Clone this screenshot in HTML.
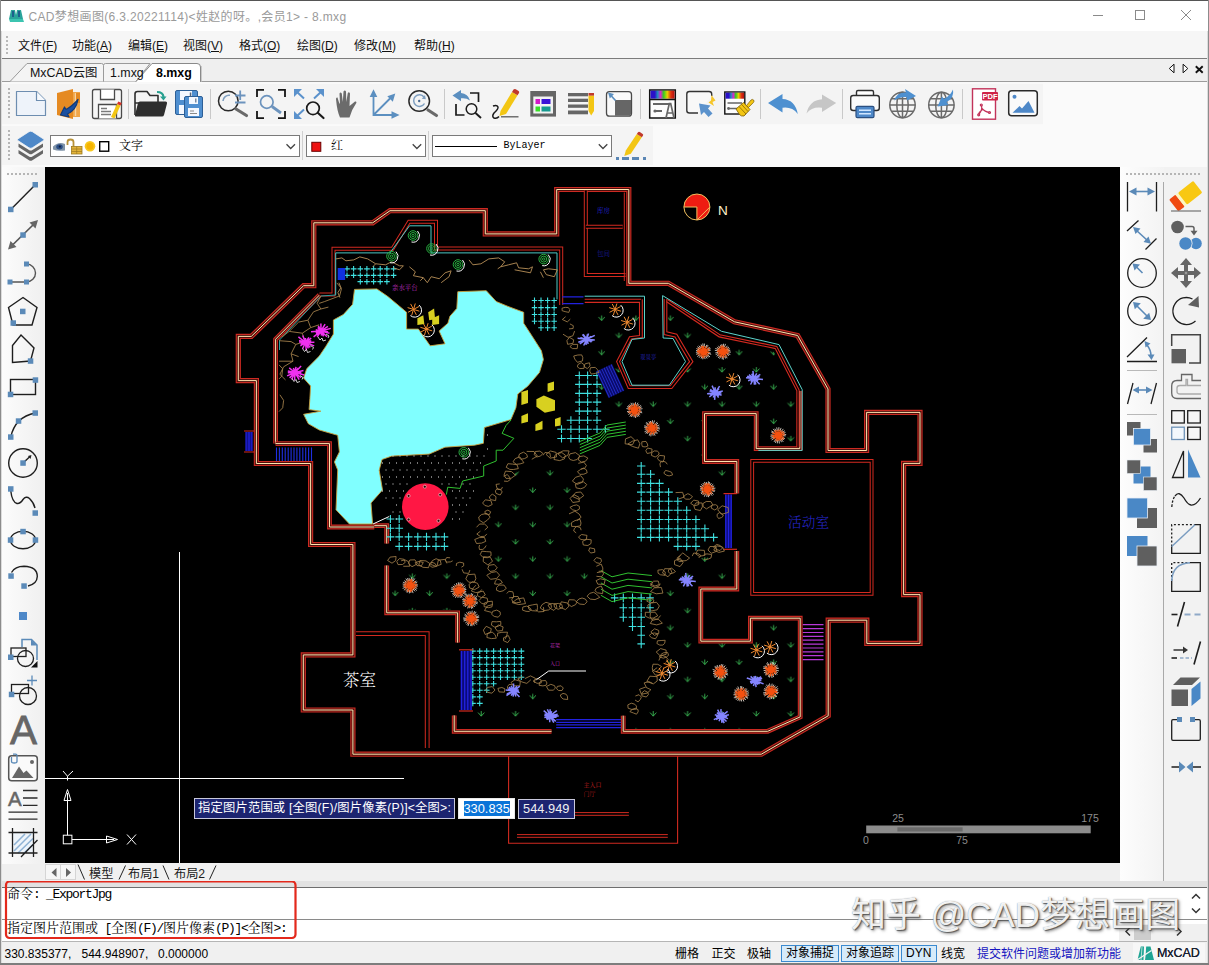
<!DOCTYPE html>
<html lang="zh-CN">
<head>
<meta charset="utf-8">
<title>CAD梦想画图</title>
<style>
html,body{margin:0;padding:0;}
body{width:1209px;height:965px;position:relative;overflow:hidden;background:#f0f0f0;
 font-family:"Liberation Sans","Noto Sans CJK SC",sans-serif;font-size:12px;color:#000;}
.abs{position:absolute;}
#win{position:absolute;left:0;top:0;width:1209px;height:965px;overflow:hidden;}
#titlebar{left:0;top:0;width:1209px;height:31px;background:#fff;border-top:1px solid #555;box-sizing:border-box;}
#title-text{left:28.500px;top:7.500px;color:#9a9a9a;font-size:12px;line-height:17px;white-space:nowrap;letter-spacing:0.340px;}
#menubar{left:0;top:31px;width:1209px;height:27px;background:#f6f6f6;}
.menu{position:absolute;top:6.500px;line-height:17px;font-size:12px;white-space:nowrap;color:#111;}
.menu u{text-decoration:underline;text-underline-offset:1px;}
#tabstrip{left:2px;top:58px;width:1205px;height:24px;background:#efefef;border-top:1px solid #7c7c7c;box-sizing:border-box;}
#tb1{left:2px;top:82px;width:1205px;height:43px;background:#f9f9f9;}
#tb2{left:2px;top:125px;width:1205px;height:42px;background:#f9f9f9;}
#lefttb{left:2px;top:167px;width:43px;height:696px;background:linear-gradient(90deg,#fbfbfb,#f1f1f1);}
#righttb1{left:1120px;top:167px;width:44px;height:714px;background:linear-gradient(90deg,#fdfdfd,#f1f1f1);}
#righttb2{left:1164px;top:167px;width:43px;height:714px;background:linear-gradient(90deg,#fbfbfb,#f1f1f1);border-left:1px solid #a8a8a8;box-sizing:border-box;}
#canvas{left:45px;top:167px;width:1075px;height:696px;background:#000;overflow:hidden;}
#layouttabs{left:2px;top:863px;width:1118px;height:18px;background:#f0f0f0;}
#cmdsep{left:2px;top:881px;width:1205px;height:7px;background:#e2e2e2;border-bottom:1px solid #6e6e6e;box-sizing:border-box;}
#cmdhist{left:2px;top:888px;width:1205px;height:31px;background:#fff;}
#cmdline{left:2px;top:919px;width:1205px;height:22px;background:#fff;border-top:1px solid #8a8a8a;box-sizing:border-box;}
#status{left:2px;top:941px;width:1205px;height:22px;background:#f0f0f0;border-top:1px solid #b5b5b5;box-sizing:border-box;}
.mono{font-family:"Liberation Mono","Noto Sans CJK SC",monospace;}
.st{position:absolute;top:5px;font-size:12px;white-space:nowrap;}
.stb{position:absolute;top:2.500px;height:17.500px;box-sizing:border-box;border:1px solid #3a8ad0;background:#d6ebfa;font-size:12px;white-space:nowrap;line-height:16px;text-align:center;}
.wb{position:absolute;background:#6f6f6f;}
.cmdt{font-family:"Liberation Mono","Noto Serif CJK SC",serif;font-size:13px;line-height:18px;white-space:nowrap;color:#000;}
.cmdt .l{font-family:"Liberation Mono",monospace;font-size:13px;letter-spacing:-1.300px;}
.st,.stb{line-height:15px;}
</style>
</head>
<body>
<div id="win">
<!-- title bar -->
<div id="titlebar" class="abs">
 <svg class="abs" style="left:8px;top:6px" width="17" height="17" viewBox="0 0 17 17">
  <path d="M1 12 L3 3 L7 3 L8 8 L9 3 L13 3 L15 12 Z" fill="#2aa39a"/>
  <path d="M4 4 L6 4 L6 10 L4 10Z M10 4 L12 4 L12 10 L10 10Z" fill="#1d5f8c"/>
  <path d="M1 12 L15 12 L16 15 L2 15 Z" fill="#3cc4b0"/>
 </svg>
 <div id="title-text" class="abs">CAD梦想画图(6.3.20221114)&lt;姓赵的呀。,会员1&gt; - 8.mxg</div>
 <svg class="abs" style="left:1080px;top:0" width="129" height="30" viewBox="0 0 129 30">
  <path d="M13 14.5 H23" stroke="#8a8a8a" stroke-width="1" fill="none"/>
  <rect x="55.5" y="9.5" width="9" height="9" stroke="#8a8a8a" stroke-width="1" fill="none"/>
  <path d="M101 9 L111 19 M111 9 L101 19" stroke="#8a8a8a" stroke-width="1" fill="none"/>
 </svg>
</div>
<!-- menu bar -->
<div id="menubar" class="abs">
 <svg class="abs" style="left:5px;top:4px" width="4" height="20"><g fill="#b8b8b8"><rect x="1" y="1" width="2" height="2"/><rect x="1" y="5" width="2" height="2"/><rect x="1" y="9" width="2" height="2"/><rect x="1" y="13" width="2" height="2"/><rect x="1" y="17" width="2" height="2"/></g></svg>
 <span class="menu" style="left:18px">文件(<u>F</u>)</span>
 <span class="menu" style="left:72px">功能(<u>A</u>)</span>
 <span class="menu" style="left:128px">编辑(<u>E</u>)</span>
 <span class="menu" style="left:183px">视图(<u>V</u>)</span>
 <span class="menu" style="left:239px">格式(<u>O</u>)</span>
 <span class="menu" style="left:297px">绘图(<u>D</u>)</span>
 <span class="menu" style="left:354px">修改(<u>M</u>)</span>
 <span class="menu" style="left:414px">帮助(<u>H</u>)</span>
</div>
<!-- document tab strip -->
<div id="tabstrip" class="abs">
 <svg class="abs" style="left:0;top:0" width="1205" height="24" viewBox="2 59 1205 24">
  <rect x="2" y="59" width="1205" height="24" fill="#efefef"/>
  <path d="M2 81.5 H1207" stroke="#9c9c9c" stroke-width="1"/>
  <path d="M10 81.5 L27 63.5 H101.5 Q103.5 63.5 103.5 65.5 V81.5" fill="#f4f4f4" stroke="#9a9a9a" stroke-width="1"/>
  <path d="M103.5 81.5 V65.5 Q103.5 63.5 105.5 63.5 H150 L136 81.5" fill="#f4f4f4" stroke="#9a9a9a" stroke-width="1"/>
  <path d="M136 82 L152 63.5 H197 Q200 63.5 200 66.5 V82 Z" fill="#fff" stroke="none"/>
  <path d="M136 81.5 L152 63.5 H197 Q200.5 63.5 200.5 67 V81.5" fill="none" stroke="#8a8a8a" stroke-width="1"/>
  <path d="M201.5 66 V81.5" stroke="#c9c9c9" stroke-width="1"/>
  <path d="M1169.3 68.500 L1174 64.200 V72.800 Z" fill="#fff" stroke="#111" stroke-width="1"/>
  <path d="M1187.8 68.500 L1183.100 64.200 V72.800 Z" fill="#fff" stroke="#111" stroke-width="1"/>
  <path d="M1195.8 66.300 L1202.700 72.800 M1202.700 66.300 L1195.800 72.800" stroke="#111" stroke-width="1.900"/>
 </svg>
 <span class="abs" style="left:28px;top:4px;font-size:12.4px;white-space:nowrap;color:#111">MxCAD云图</span>
 <span class="abs" style="left:108px;top:6.500px;line-height:14px;font-size:12.4px;white-space:nowrap;color:#111">1.mxg</span>
 <span class="abs" style="left:154px;top:6.500px;line-height:14px;font-size:12.4px;white-space:nowrap;color:#000;font-weight:bold">8.mxg</span>
</div>
<div id="tb1" class="abs"></div>
<div id="tb2" class="abs"></div>



<div id="layouttabs" class="abs"></div>
<div id="cmdsep" class="abs"></div>
<div id="cmdhist" class="abs"></div>
<div id="cmdline" class="abs"></div>
<div id="status" class="abs"></div>
<svg class="abs" style="left:0;top:82px" width="1209" height="43" viewBox="0 82 1209 43">
 <defs>
  <linearGradient id="rainbow" x1="0" x2="1" y1="0" y2="0">
   <stop offset="0" stop-color="#2a10c8"/><stop offset="0.18" stop-color="#2a10c8"/>
   <stop offset="0.3" stop-color="#2090c0"/><stop offset="0.42" stop-color="#e020d0"/>
   <stop offset="0.55" stop-color="#30d020"/><stop offset="0.7" stop-color="#e8d000"/>
   <stop offset="0.85" stop-color="#e03010"/><stop offset="1" stop-color="#b01010"/>
  </linearGradient>
 </defs>
 <rect x="2" y="84" width="1041" height="40" fill="#f4f4f4"/>
 <rect x="1043" y="82" width="164" height="43" fill="#fafafa"/>
 <!-- grip -->
 <g fill="#b5b5b5"><rect x="8" y="88" width="2" height="2"/><rect x="8" y="92" width="2" height="2"/><rect x="8" y="96" width="2" height="2"/><rect x="8" y="100" width="2" height="2"/><rect x="8" y="104" width="2" height="2"/><rect x="8" y="108" width="2" height="2"/><rect x="8" y="112" width="2" height="2"/><rect x="8" y="116" width="2" height="2"/></g>
 <!-- separators -->
 <g stroke="#c9c9c9" stroke-width="1"><path d="M128.500 89 V119 M210.500 89 V119 M444.500 89 V119 M640.500 89 V119 M760.500 89 V119 M842.500 89 V119 M962.500 89 V119"/></g>
 <!-- 1 new -->
 <path d="M16.500 91.500 H36.500 L45.500 100.500 V115.500 H16.500 Z" fill="#eef3fa" stroke="#6d8db0" stroke-width="1.2" stroke-linejoin="round"/>
 <path d="M36.500 91.500 V100.500 H45.500" fill="#f6f9fd" stroke="#6d8db0" stroke-width="1.2" stroke-linejoin="round"/>
 <!-- 2 orange folder with arrow -->
 <path d="M57 93 L73 89 V119 L57 115 Z" fill="#e58a22"/>
 <path d="M73 92 H80 V117 H73 Z" fill="#f0a64a"/>
 <path d="M75.500 93 V116" stroke="#f8d3a0" stroke-width="1.4"/>
 <path d="M76 103 H80 V93 H76Z" fill="#e58a22"/>
 <path d="M78 99.500 Q76 110.500 67.500 114 L69 117 L60.500 115 L64.500 107 L66 109.500 Q72 106.500 78 99.500 Z" fill="#1a4fa0" stroke="#123a78" stroke-width="1.2" stroke-linejoin="round"/>
 <!-- 3 save w pencil -->
 <rect x="92.500" y="89.500" width="29" height="29" rx="2" fill="#f6f6f6" stroke="#4a4a4a" stroke-width="1.3"/>
 <path d="M100.500 89.500 V99.500 H114.500 V89.500" fill="#fff" stroke="#4a4a4a" stroke-width="1.3"/>
 <path d="M98.500 118.500 V104.500 H116.500 V118.500" fill="#fff" stroke="#4a4a4a" stroke-width="1.3"/>
 <path d="M101 108.500 H107 M101 111.500 H111 M101 114.500 H111" stroke="#7a7a7a" stroke-width="1.6"/>
 <path d="M111 117 L117 104 L120.500 105.500 L114.500 118.500 Z" fill="#f3c614"/>
 <path d="M117 104 L118.300 101.500 L121.800 103 L120.500 105.500 Z" fill="#d8342a"/>
 <!-- 4 open folder -->
 <path d="M135 115 V94 Q135 91.500 137.500 91.500 H147 L150 95.500 H158 V103 H135" fill="#f4f4f4" stroke="#2e2e2e" stroke-width="1.6" stroke-linejoin="round"/>
 <path d="M136 116.500 Q134.500 116.500 135 115 L138 103 Q138.500 101.500 140 101.500 H165.500 Q167.500 101.500 167 103.500 L164 115 Q163.500 116.500 162 116.500 Z" fill="#2e2e2e"/>
 <path d="M157 92 Q163 92 163.500 97" fill="none" stroke="#28a090" stroke-width="2.2"/>
 <path d="M160 96.500 H166.500 L163.500 100.500 Z" fill="#28a090"/>
 <!-- 5 save all -->
 <rect x="175.500" y="90.500" width="22" height="24" rx="1.500" fill="#4f8fd0" stroke="#2d5f96" stroke-width="1"/>
 <rect x="180" y="91" width="12" height="9" fill="#f4f8ff"/>
 <rect x="179" y="105" width="5" height="9" fill="#f4f8ff"/>
 <rect x="184.500" y="96.500" width="18" height="21" rx="1.500" fill="#4f8fd0" stroke="#2d5f96" stroke-width="1"/>
 <rect x="189" y="97" width="9" height="7" fill="#f4f8ff"/><rect x="195" y="98.500" width="1.500" height="4" fill="#7a8aa0"/>
 <rect x="188" y="108" width="11" height="8" fill="#f4f8ff"/><path d="M190 111 H194 M190 113.500 H197" stroke="#8a8a8a" stroke-width="1"/>
 <rect x="189.800" y="92.500" width="1.500" height="4" fill="#55657a"/>
 <!-- 6 zoom +/- -->
 <circle cx="228.300" cy="101" r="9.800" fill="none" stroke="#2a2a2a" stroke-width="1.500"/>
 <path d="M223 101 A6 6 0 0 1 230 95.300" fill="none" stroke="#7f9fc0" stroke-width="1.600"/>
 <path d="M236 109 L246.500 115.500" stroke="#6a6a6a" stroke-width="3.200" stroke-linecap="round"/>
 <path d="M235 95.500 H245.500 M240.200 90.500 V100 M235 102.500 H245.500" stroke="#6c93bd" stroke-width="1.800"/>
 <!-- 7 zoom window -->
 <path d="M264 89.800 H257 V97 M278 89.800 H285 V97 M264 118.200 H257 V111 M278 118.200 H285 V111" fill="none" stroke="#151515" stroke-width="1.800"/>
 <circle cx="266.800" cy="102" r="6.300" fill="none" stroke="#6c93bd" stroke-width="1.700"/>
 <path d="M272 106.500 L281 113" stroke="#6c93bd" stroke-width="2.800"/>
 <!-- 8 zoom extents -->
 <g fill="#5b92cc"><path d="M294 89 H302 L294 97Z M324 89 H316 L324 97Z M294 119 H302 L294 111Z"/></g>
 <path d="M296 91 L304 98.500 M322 91 L314 98.500 M296 117 L304 109.500" stroke="#5b92cc" stroke-width="2"/>
 <circle cx="313" cy="108.300" r="6.300" fill="none" stroke="#1a1a1a" stroke-width="1.700"/>
 <path d="M318 113 L323.500 118" stroke="#1a1a1a" stroke-width="2.200" stroke-linecap="round"/>
 <!-- 9 hand -->
 <path d="M340 117.500 Q337 111 336 99 Q336 97 337.500 97.500 Q339 103 340 104 L339.500 93.500 Q340.500 91.500 341.800 93.500 L342.800 102 L343.500 91.500 Q344.800 89.500 346 91.500 L346.300 102 L347.800 93 Q349 91.500 350 93.500 L349.500 106 Q352 104 355 101.500 Q357 101 356.300 103 Q352 109 349.500 117.500 Z" fill="#6b6b6b"/>
 <!-- 10 axes -->
 <path d="M373.500 97 V115 H392 M373.500 115 L390 98.500" fill="none" stroke="#5b8fc0" stroke-width="1.800"/>
 <path d="M373.500 89.300 L377.300 97 H369.700Z M399.600 115 L391.500 111.200 V118.800Z M395.300 93.500 L392.800 101.800 L387.300 96.300Z" fill="#5b8fc0"/>
 <!-- 11 zoom regen -->
 <circle cx="419.200" cy="101" r="10.300" fill="none" stroke="#2a2a2a" stroke-width="1.500"/>
 <path d="M428 110 L436.500 115.500" stroke="#6a6a6a" stroke-width="3.200" stroke-linecap="round"/>
 <path d="M424.500 103.500 A5.800 5.800 0 1 1 424 97" fill="none" stroke="#7f9fc0" stroke-width="1.500"/>
 <path d="M421.800 98.800 L425.800 99.300 L425 95Z" fill="#7f9fc0"/><circle cx="419.200" cy="101" r="1.200" fill="#4a6a90"/>
 <!-- 12 zoom previous -->
 <path d="M470 93 H478.500 V102 M456 104 V115 H464.500" fill="none" stroke="#1a1a1a" stroke-width="1.700"/>
 <circle cx="471.500" cy="109" r="5.300" fill="none" stroke="#1a1a1a" stroke-width="1.500"/>
 <path d="M475.500 113 L481 118" stroke="#1a1a1a" stroke-width="1.900"/>
 <path d="M452.500 95.500 L461 90 V93 Q468 93.500 470 100.500 Q466 97.500 461 98.300 V101.300 Z" fill="#5b8fc0"/>
 <!-- 13 sketch pencil -->
 <path d="M493 106 Q497 104.500 498 107 Q498.500 109 494 113 Q491.500 116.500 494 118 Q497 119 499 116.500" fill="none" stroke="#1a1a1a" stroke-width="1.500"/>
 <path d="M501 116.800 H518.500" stroke="#5a5a5a" stroke-width="1.300"/>
 <path d="M499.500 116 L500.500 111 L512 92 L517.500 95.200 L506 114 Z" fill="#f3c614"/>
 <path d="M512 92 L513.500 89.500 Q514.500 88.500 515.800 89.200 L518.600 90.900 Q519.600 91.800 519 93 L517.500 95.200 Z" fill="#c0392b"/>
 <!-- 14 color grid -->
 <rect x="530.300" y="91" width="25.700" height="25.600" fill="#666"/>
 <rect x="533.300" y="96.500" width="19.700" height="17" fill="#f2f2f2"/>
 <rect x="535.500" y="99" width="4.500" height="5" fill="#d418c8"/><rect x="541.500" y="99" width="9" height="5" fill="#3a14d8"/>
 <rect x="535.500" y="106.500" width="4.500" height="5" fill="#38e028"/><rect x="541.500" y="106.500" width="9" height="5" fill="#159a90"/>
 <!-- 15 lines + pencil -->
 <g fill="#666"><rect x="568" y="93" width="20" height="3.300"/><rect x="568" y="98.700" width="20" height="3.300"/><rect x="568" y="104.500" width="20" height="3.300"/><rect x="568" y="110.500" width="20" height="3.800"/></g>
 <path d="M588.500 95.500 H594 V111 L591.200 115.500 L588.500 111 Z" fill="#f3c614"/><rect x="588.500" y="93" width="5.500" height="2.600" fill="#c0392b"/>
 <!-- 16 scale -->
 <rect x="606.500" y="91.700" width="25" height="24.500" rx="3" fill="#fafafa" stroke="#4a4a4a" stroke-width="1.300"/>
 <path d="M615 100 H631 V113.500 Q631 115.700 628.500 115.700 H615 Z" fill="#666"/>
 <path d="M615.500 100.500 L610.500 95" stroke="#5b8fc0" stroke-width="1.700"/><path d="M608 92.500 L614 94 L609.800 98.500Z" fill="#5b8fc0"/>
 <!-- 17 rainbow A -->
 <rect x="649.700" y="90" width="25.600" height="28" fill="#fdfdfd" stroke="#111" stroke-width="1.500"/>
 <rect x="650.500" y="90.700" width="24" height="8" fill="url(#rainbow)"/>
 <path d="M649 99.500 H676" stroke="#111" stroke-width="1.500"/>
 <path d="M653 104 H671 M654 111 H662" stroke="#666" stroke-width="2"/><circle cx="655" cy="111" r="1.600" fill="#666"/>
 <path d="M666 118 L669.300 103.500 H670.700 L674 118 M667.300 113 H672.700" fill="none" stroke="#666" stroke-width="1.700"/>
 <!-- 18 select w cursor -->
 <path d="M698 113 H689.500 Q686.800 113 686.800 110.500 V94 Q686.800 91.500 689.500 91.500 H709 Q711.700 91.500 711.700 94 V96" fill="#f8f8f8" stroke="#333" stroke-width="1.400"/>
 <path d="M711.500 95 L715.500 100.500 L712.500 102 L714 106 L708.500 102.500 L711 100.500 Z" fill="#f6c62a"/>
 <path d="M699 103.500 L710.500 105.500 L708 108.500 L712.500 113.500 L708.500 117 L704 112 L701 115 Z" fill="#5b92cc"/>
 <!-- 19 rainbow brush -->
 <rect x="724.800" y="92" width="20" height="22" fill="#fdfdfd" stroke="#111" stroke-width="1.400"/>
 <rect x="725.500" y="92.700" width="18.600" height="6" fill="url(#rainbow)"/>
 <path d="M727.500 103 H742 M728 108.500 H740" stroke="#666" stroke-width="1.700"/><circle cx="728.500" cy="108.500" r="1.400" fill="#666"/>
 <path d="M736 109 L743.500 102.500 L750 109.500 L744 116 Q741 116.500 739.500 114.500 Z" fill="#f3c614" stroke="#7a5a00" stroke-width="0.800"/>
 <path d="M746.500 105.500 L751 100 Q752.500 98.800 753.600 100 Q754.500 101.300 753.400 102.500 L748.500 107.500 Z" fill="#f3c614" stroke="#7a5a00" stroke-width="0.700"/>
 <path d="M739 106.500 L746 114 M741.500 104.300 L748 111.500" stroke="#7a5a00" stroke-width="0.700"/>
 <!-- 20 undo -->
 <path d="M768 103 L782.500 94 V99 Q795 99.500 797.800 114 Q792 106.500 782.500 107.800 V112.500 Z" fill="#4e90d0"/>
 <!-- 21 redo -->
 <path d="M836.200 103 L822 94.500 V99.300 Q809.500 100 806.500 113.500 Q812 106.500 822 107.800 V112 Z" fill="#c6c6c6"/>
 <!-- 22 printer -->
 <path d="M856.500 96 V92 Q856.500 90.500 858 90.500 H872 Q873.500 90.500 873.500 92 V96" fill="#fff" stroke="#2e2e2e" stroke-width="1.400"/>
 <rect x="850.700" y="95.500" width="28.600" height="15" rx="2.500" fill="#fbfbfb" stroke="#2e2e2e" stroke-width="1.400"/>
 <rect x="856" y="106.300" width="18" height="11.400" rx="1.500" fill="#4e88c8" stroke="#2b4f80" stroke-width="1.200"/>
 <path d="M859 110.300 H871 M859 113.700 H871" stroke="#cfe6ff" stroke-width="1.500"/>
 <!-- 23 globe out -->
 <g fill="none" stroke="#6a6a6a" stroke-width="1.500">
  <circle cx="902.500" cy="105" r="12.700"/><ellipse cx="902.500" cy="105" rx="5.700" ry="12.700"/>
  <path d="M902.500 92.300 V117.700 M889.800 105 H915.200 M891.500 98.700 H913.500 M891.500 111.300 H913.500"/>
 </g>
 <path d="M894 100.500 Q897 92 906 92.500 L905 89 L916 96 L907 100.500 L906.500 97 Q900 96.500 894 100.500 Z" fill="#4e90d0"/>
 <!-- 24 globe in -->
 <g fill="none" stroke="#6a6a6a" stroke-width="1.500">
  <circle cx="941.400" cy="105" r="12.700"/><ellipse cx="941.400" cy="105" rx="5.700" ry="12.700"/>
  <path d="M941.400 92.300 V117.700 M928.700 105 H954.100 M930.400 98.700 H952.400 M930.400 111.300 H952.400"/>
 </g>
 <path d="M953 89.500 Q954.500 98 946.500 102 L948.500 105 L937.500 106.500 L942 96.500 L944 99 Q950 96 953 89.500 Z" fill="#4e90d0"/>
 <!-- 25 pdf -->
 <rect x="972.500" y="88.800" width="23" height="30.400" fill="#fff" stroke="#c2335a" stroke-width="1.400"/>
 <rect x="982" y="92" width="16" height="8.500" rx="1" fill="#cf2348"/>
 <text x="990" y="99.300" font-family="Liberation Sans,sans-serif" font-weight="bold" font-size="7.600" fill="#fff" text-anchor="middle">PDF</text>
 <g fill="none" stroke="#c2335a" stroke-width="1.200"><path d="M981.500 105.500 Q982.500 110 979 114.500 M981.500 108 Q985 112 989.500 112.500 M982.500 109.500 Q979 112 978.500 114.500"/><circle cx="981.300" cy="105" r="1"/><circle cx="989.500" cy="112.500" r="1"/><circle cx="978.700" cy="114.800" r="1"/></g>
 <!-- 26 image -->
 <rect x="1008.700" y="90.800" width="28.600" height="25" rx="3" fill="#fafafa" stroke="#2a2a2a" stroke-width="1.500"/>
 <circle cx="1014.500" cy="96.800" r="2" fill="#4e88c8"/>
 <path d="M1012.500 112.800 L1019.500 106 L1022 108.500 L1028.500 101 L1034.500 112.800 Z" fill="#4e88c8"/>
</svg>
<svg class="abs" style="left:0;top:125px" width="1209" height="42" viewBox="0 125 1209 42">
 <rect x="2" y="125" width="1205" height="42" fill="#fafafa"/>
 <rect x="2" y="126" width="651" height="39" fill="#f4f4f4"/>
 <g fill="#b5b5b5"><rect x="8" y="130" width="2" height="2"/><rect x="8" y="134" width="2" height="2"/><rect x="8" y="138" width="2" height="2"/><rect x="8" y="142" width="2" height="2"/><rect x="8" y="146" width="2" height="2"/><rect x="8" y="150" width="2" height="2"/><rect x="8" y="154" width="2" height="2"/><rect x="8" y="158" width="2" height="2"/></g>
 <!-- layers icon -->
 <path d="M18.500 148 L29 154.500 Q30.700 155.500 32.400 154.500 L43 148 L43 151.500 L32.400 158.300 Q30.700 159.300 29 158.300 L18.500 151.500 Z" fill="#666" transform="translate(0,2)"/>
 <path d="M18.500 148 L29 154.500 Q30.700 155.500 32.400 154.500 L43 148 L43 151.500 L32.400 158.300 Q30.700 159.300 29 158.300 L18.500 151.500 Z" fill="#666" transform="translate(0,-4.500)"/>
 <path d="M17.800 140.500 Q16.800 139.800 17.800 139 L29 131.700 Q30.700 130.700 32.400 131.700 L43.500 139 Q44.600 139.800 43.500 140.500 L32.400 147.800 Q30.700 148.800 29 147.800 Z" fill="#4e88c8" stroke="#f4f4f4" stroke-width="0.800"/>
 <!-- combo 1 -->
 <rect x="50.500" y="135.500" width="249" height="21" fill="#fff" stroke="#7a7a7a" stroke-width="1"/>
 <path d="M286.500 144.300 L290.700 148.500 L295 144.300" fill="none" stroke="#444" stroke-width="1.300"/>
 <!-- eye -->
 <path d="M53 146.500 Q58.500 141 65 144 V150.500 Q58 151.500 53 149.500 Z" fill="#7f93a8"/>
 <ellipse cx="59.500" cy="146.800" rx="3.300" ry="2.600" fill="#2c4f86"/><circle cx="59.800" cy="146.600" r="1.100" fill="#0c1c3c"/>
 <!-- lock -->
 <path d="M67.500 145 V142 Q67.500 139.500 70.500 139.500 Q73.500 139.500 73.500 142 V146.500" fill="none" stroke="#b8923a" stroke-width="1.800"/>
 <rect x="71.500" y="146.500" width="10.500" height="7.500" fill="#e3b33a" stroke="#9c7a20" stroke-width="0.800"/>
 <path d="M71.500 149 H82 M71.500 151.500 H82 M76.700 146.500 V154" stroke="#9c7a20" stroke-width="0.700"/>
 <!-- sun -->
 <circle cx="90" cy="146.300" r="5.300" fill="#f8c81e"/><circle cx="90" cy="146.300" r="3.500" fill="#f5b400"/>
 <!-- square -->
 <rect x="99.700" y="141.700" width="9" height="9.500" fill="#fff" stroke="#000" stroke-width="1.400"/>
 <line x1="302.500" y1="131" x2="302.500" y2="160" stroke="#d0d0d0"/>
 <!-- combo 2 -->
 <rect x="306.500" y="135.500" width="119" height="21" fill="#fff" stroke="#7a7a7a" stroke-width="1"/>
 <rect x="311.800" y="142.300" width="9" height="9" fill="#ee1111" stroke="#6a0000" stroke-width="1"/>
 <path d="M412.700 144.300 L416.900 148.500 L421.200 144.300" fill="none" stroke="#444" stroke-width="1.300"/>
 <line x1="428.500" y1="131" x2="428.500" y2="160" stroke="#d0d0d0"/>
 <!-- combo 3 -->
 <rect x="432.500" y="135.500" width="179" height="21" fill="#fff" stroke="#7a7a7a" stroke-width="1"/>
 <path d="M435 146.500 H497" stroke="#000" stroke-width="1"/>
 <path d="M598.800 144.300 L603 148.500 L607.300 144.300" fill="none" stroke="#444" stroke-width="1.300"/>
 <!-- pencil dashed -->
 <path d="M624.300 156 L625.800 150.500 L636.800 134 L641.800 137.300 L630.800 153.800 Z" fill="#f3c614"/>
 <path d="M636.800 134 L638 132.200 Q638.800 131.400 639.800 132 L642.700 133.900 Q643.600 134.700 643 135.600 L641.800 137.300 Z" fill="#c0392b"/>
 <g fill="#5a86b4"><rect x="616" y="157" width="3" height="3"/><rect x="622" y="157" width="7" height="3"/><rect x="632" y="157" width="7" height="3"/><rect x="643" y="157" width="3" height="3"/></g>
</svg>
<span class="abs" style="left:119px;top:138px;font-size:12px;line-height:16px;white-space:nowrap;font-family:'Liberation Serif','Noto Serif CJK SC',serif">文字</span>
<span class="abs" style="left:331px;top:138px;font-size:12px;line-height:16px;white-space:nowrap;font-family:'Liberation Serif','Noto Serif CJK SC',serif">红</span>
<span class="abs mono" style="left:503.500px;top:138px;font-size:10px;line-height:16px;white-space:nowrap;font-family:'Liberation Mono',monospace">ByLayer</span>
<svg class="abs" style="left:0;top:167px" width="45" height="714" viewBox="0 167 45 714">
 <defs><linearGradient id="lg" x1="0" x2="1"><stop offset="0" stop-color="#fcfcfc"/><stop offset="1" stop-color="#efefef"/></linearGradient></defs>
 <rect x="2" y="167" width="43" height="697" fill="url(#lg)"/>
 <rect x="2" y="864" width="43" height="17" fill="#f0f0f0"/>
 <g fill="#b5b5b5"><rect x="7" y="173" width="2" height="2"/><rect x="11" y="173" width="2" height="2"/><rect x="15" y="173" width="2" height="2"/><rect x="19" y="173" width="2" height="2"/><rect x="23" y="173" width="2" height="2"/><rect x="27" y="173" width="2" height="2"/><rect x="31" y="173" width="2" height="2"/><rect x="35" y="173" width="2" height="2"/></g>
 <g fill="none" stroke="#1e1e1e" stroke-width="1.400">
  <!-- line -->
  <path d="M10.800 209.400 L35.300 184.700"/>
  <!-- polyline -->
  <path d="M10 282 H26.500 A9 9 0 0 0 26.500 264" stroke="#555"/>
  <!-- polygon -->
  <path d="M23 297.500 L37 307.500 L32 325 H13 L8.500 307.500 Z"/>
  <path d="M21 335 L34 348 L30.500 361 L12.500 362.500 V345.500 Z"/>
  <!-- rect -->
  <rect x="10.500" y="379.500" width="25" height="15"/>
  <!-- arc -->
  <path d="M10.800 437 Q15 417 35.300 413"/>
  <!-- circle -->
  <circle cx="23" cy="463" r="14.300"/>
  <path d="M23 463 L30 456.500"/>
  <!-- spline -->
  <path d="M10.800 491 Q12 502 17 503.500 Q20 504 23 499.500 Q26 495.500 29.500 498.500 Q34 503 35 508"/>
  <!-- ellipse -->
  <ellipse cx="23" cy="540" rx="12.500" ry="8.800"/>
  <!-- ellipse arc -->
  <path d="M11.500 572.500 Q15 566.300 24 566.300 Q37.300 566.800 37.300 576.500 Q37 584 28 586"/>
  <!-- insert block -->
  <rect x="11" y="648" width="15" height="8.500" stroke-width="1.300"/>
  <circle cx="25.500" cy="658.500" r="8" stroke-width="1.300"/>
  <!-- create block -->
  <rect x="11.500" y="684.500" width="17" height="9" stroke-width="1.300"/>
  <circle cx="28" cy="696" r="8.500" stroke-width="1.300"/>
 </g>
 <path d="M31.500 455 L28 456 L30.500 459Z" fill="#1e1e1e"/>
 <!-- xline -->
 <path d="M12 245.500 L34 224" stroke="#555" stroke-width="1.700"/>
 <path d="M38 220 L29.500 222.500 L35.500 228.500Z M8 249.500 L16.500 247 L10.500 241Z" fill="#666"/>
 <g fill="#5b8ab8">
  <rect x="32.500" y="182" width="5.500" height="5.500"/><rect x="8" y="206.700" width="5.500" height="5.500"/>
  <rect x="20.300" y="232.300" width="5.500" height="5.500"/>
  <rect x="7.500" y="279.500" width="5" height="5"/><rect x="24" y="279.500" width="5" height="5"/><rect x="24" y="261.500" width="5" height="5"/>
  <rect x="20" y="308.700" width="5.500" height="5.500"/><rect x="10.500" y="320.300" width="5.500" height="5.500"/>
  <rect x="27.800" y="358.300" width="5.500" height="5.500"/>
  <rect x="32.700" y="377.300" width="5.500" height="5.500"/><rect x="7.800" y="391.700" width="5.500" height="5.500"/>
  <rect x="32.500" y="410.300" width="5.500" height="5.500"/><rect x="15.800" y="418.300" width="5.500" height="5.500"/><rect x="8" y="434.300" width="5.500" height="5.500"/>
  <rect x="20.300" y="460.300" width="5.500" height="5.500"/>
  <rect x="8" y="486.200" width="5.500" height="5.500"/><rect x="32.500" y="510.300" width="5.500" height="5.500"/>
  <rect x="20.300" y="528.800" width="5.500" height="5.500"/><rect x="7.800" y="537.300" width="5.500" height="5.500"/><rect x="32.700" y="537.300" width="5.500" height="5.500"/>
  <rect x="8.300" y="573.300" width="5.500" height="5.500"/><rect x="21.300" y="583.300" width="5.500" height="5.500"/>
  <rect x="19" y="612" width="8" height="8" fill="#4e88c8"/>
  <rect x="8" y="654.500" width="5.500" height="5.500"/>
  <rect x="8.800" y="691.700" width="5.500" height="5.500"/>
 </g>
 <!-- insert block doc -->
 <path d="M22 647 V639.500 H31.500 L37 645 V660" fill="none" stroke="#5b8ab8" stroke-width="1.500"/>
 <path d="M31 639.500 L37 645.500 H31Z" fill="#5b8ab8"/>
 <path d="M37.500 661 V667.500 H31Z" fill="#111"/>
 <path d="M27 680.500 H37 M32 675.500 V685.500" stroke="#5b8ab8" stroke-width="1.300"/>
 <!-- big A -->
 <text x="23.500" y="744" font-family="Liberation Sans,sans-serif" font-size="40.500" fill="#666" text-anchor="middle" stroke="#666" stroke-width="0.800">A</text>
 <!-- image icon -->
 <rect x="8.700" y="755.700" width="28.600" height="25" rx="3" fill="#fafafa" stroke="#555" stroke-width="1.500"/>
 <circle cx="32" cy="762" r="2" fill="#666"/>
 <path d="M12 778 L19 766.500 L23.500 773 L26.500 770.500 L33.500 778 Z" fill="#666"/>
 <path d="M11.500 757 V761.500 Q11.500 763 14.200 763 Q17 763 17 761.500 V755.500 Q17 754.200 15.500 754.200 H13" fill="none" stroke="#5b8ab8" stroke-width="1.300"/>
 <!-- mtext -->
 <text x="14.800" y="806" font-family="Liberation Sans,sans-serif" font-size="20.500" fill="#666" text-anchor="middle" stroke="#666" stroke-width="0.500">A</text>
 <path d="M23 790.500 H37.500 M23 798 H37.500 M23 805.300 H37.500 M8.500 812.200 H37.500 M8.500 819.200 H37.500" stroke="#2a2a2a" stroke-width="1.300"/>
 <!-- hatch -->
 <rect x="13" y="833" width="20" height="20" fill="#eef4fa"/>
 <path d="M14 845 L25 834 M14 851 L31 834 M18 853 L33 838.500 M24 853 L33 844.500" stroke="#8fb2d4" stroke-width="1.500"/>
 <path d="M12.500 828 V857 M33.500 828 V857 M8.500 832.500 H37.500 M8.500 853 H37.500 M21 857 L37.500 840" stroke="#1e1e1e" stroke-width="1.300" fill="none"/>
</svg>
<svg class="abs" style="left:1120px;top:167px" width="89" height="714" viewBox="1120 167 89 714">
 <defs><linearGradient id="rg" x1="0" x2="1"><stop offset="0" stop-color="#fdfdfd"/><stop offset="1" stop-color="#f3f3f3"/></linearGradient></defs>
 <rect x="1120" y="167" width="44" height="714" fill="url(#rg)"/>
 <rect x="1164" y="167" width="43" height="714" fill="#f2f2f2"/>
 <path d="M1163.500 182 V881" stroke="#a9a9a9" stroke-width="1"/>
 <g fill="#b5b5b5" id="rgrip"></g>
 <path d="M1126 174 H1200" stroke="#b5b5b5" stroke-width="2" stroke-dasharray="2 2"/>
 <g fill="none" stroke="#1e1e1e" stroke-width="1.300">
  <!-- linear dim -->
  <path d="M1127.500 182 V211.500 M1156.500 182 V211.500"/>
  <!-- aligned dim -->
  <path d="M1127 231 L1138.500 220.500 M1145.500 249.500 L1156.500 238.500"/>
  <!-- radius -->
  <circle cx="1142" cy="273" r="14.300"/>
  <!-- diameter -->
  <circle cx="1142" cy="311" r="14.300"/>
  <!-- angular -->
  <path d="M1127 357 L1147 337.500 M1127 361.500 H1157"/>
  <!-- quick dim -->
  <path d="M1127.500 404 L1133 383 M1151 404 L1156.500 383"/>
  <!-- rotate -->
  <path d="M1192.500 299 A13.500 13.500 0 1 0 1195.500 321" />
  <!-- scale -->
  <path d="M1171.700 346 V334.700 H1200.300 V363 H1189" stroke="#444" stroke-width="1.500"/>
  <!-- array -->
  <rect x="1171.700" y="410.700" width="12.600" height="12.300" fill="#f6f6f6"/><rect x="1187.700" y="410.700" width="12.600" height="12.300" fill="#f6f6f6"/><rect x="1187.700" y="427.200" width="12.600" height="12.300" fill="#f6f6f6"/>
  <!-- mirror -->
  <path d="M1183.500 451 V477.500 H1172.500 Z"/>
  <!-- wave -->
  <path d="M1171.800 507 Q1172.500 499 1175 496" stroke-dasharray="2.500 1.500"/>
  <path d="M1175 496 Q1179 490.500 1184 498 Q1187.500 504.500 1191 505 Q1196 505.500 1200.500 498"/>
  <!-- chamfer -->
  <path d="M1195 524.700 H1200.300 V553.300 H1171.700 V546.500"/>
  <path d="M1171.700 546.500 V524.700 H1195" stroke-dasharray="2 2"/>
  <!-- fillet -->
  <path d="M1190 562.700 H1200.300 V591.300 H1171.700 V581"/>
  <path d="M1171.700 581 V562.700 H1190" stroke-dasharray="2 2"/>
  <!-- trim -->
  <path d="M1184.500 602 L1177.500 626.500" stroke-width="1.600"/><path d="M1171.500 614.500 H1177.500" stroke-width="1.600"/>
  <!-- extend -->
  <path d="M1200.500 641.500 L1194 664.500" stroke-width="1.600"/><path d="M1171.500 658 H1177" stroke-width="1.600"/>
  <path d="M1173.500 650 H1184" stroke="#333" stroke-width="1.500"/>
  <!-- break -->
  <path d="M1182 719.700 H1173 Q1171.700 719.700 1171.700 721 V739 Q1171.700 740.300 1173 740.300 H1199 Q1200.300 740.300 1200.300 739 V721 Q1200.300 719.700 1199 719.700 H1190"/>
  <!-- join -->
  <path d="M1171.500 767 H1180 M1192 767 H1201" stroke-width="1.500"/>
 </g>
 <path d="M1183 646.500 L1188 650 L1183 653.500Z" fill="#333"/>
 <!-- blue dims -->
 <g stroke="#5b8ab8" stroke-width="1.600" fill="#5b8ab8">
  <path d="M1134 191.500 H1150"/><path d="M1129 191.500 L1136.500 187.500 V195.500Z M1155 191.500 L1147.500 187.500 V195.500Z" stroke="none"/>
  <path d="M1136 230 L1148 241"/><path d="M1133 227 L1140.500 228.500 L1135.500 234Z M1151 243.800 L1143.500 242 L1148.500 236.500Z" stroke="none"/>
  <path d="M1142.500 273 L1136 266.500"/><path d="M1132.500 263.500 L1140 264.500 L1134.500 270.500Z" stroke="none"/>
  <path d="M1136.500 305.500 L1147.500 316.500"/><path d="M1133 302 L1140.800 303.300 L1134.800 309.300Z M1151 320 L1143.200 318.700 L1149.200 312.700Z" stroke="none"/>
  <path d="M1147 345 Q1151 350 1151 356" fill="none"/><path d="M1144.500 341 L1150.500 343.500 L1145.500 347.500Z M1151.500 360 L1147.500 354.500 L1154.500 354.500Z" stroke="none"/>
  <path d="M1137 390 H1148"/><path d="M1132.500 390 L1139 386.500 V393.500Z M1152.500 390 L1146 386.500 V393.500Z" stroke="none"/>
 </g>
 <path d="M1127 370.500 H1157 M1127 414.500 H1157" stroke="#b9b9b9" stroke-width="1"/>
 <!-- draw order -->
 <g>
  <rect x="1127" y="422" width="13.500" height="13.500" fill="#5f5f5f"/><rect x="1143.500" y="439" width="13.500" height="13.500" fill="#5f5f5f"/><rect x="1133.500" y="428.500" width="17" height="16.500" fill="#4a88c6" stroke="#e8eef6" stroke-width="0.800"/>
  <rect x="1133.500" y="466.500" width="17" height="17" fill="#4a88c6"/><rect x="1127" y="460" width="13.500" height="13.500" fill="#5f5f5f" stroke="#e8eef6" stroke-width="0.600"/><rect x="1143.500" y="477" width="13.500" height="13.500" fill="#5f5f5f" stroke="#e8eef6" stroke-width="0.600"/>
  <rect x="1137" y="508" width="20" height="20" fill="#5f5f5f"/><rect x="1127" y="498" width="20.500" height="20" fill="#4a88c6" stroke="#e8eef6" stroke-width="0.800"/>
  <rect x="1127" y="536" width="20.500" height="20" fill="#4a88c6"/><rect x="1137" y="546" width="20" height="20" fill="#5f5f5f" stroke="#e8eef6" stroke-width="0.800"/>
 </g>
 <!-- eraser -->
 <g transform="rotate(-38 1186 196)">
  <rect x="1170.500" y="188.500" width="8" height="15" rx="1" fill="#f04a12"/><rect x="1178.500" y="188.500" width="3" height="15" fill="#fdf6c0"/><rect x="1181.500" y="188.500" width="19.500" height="15" rx="1.500" fill="#f8c812"/>
 </g>
 <path d="M1171 211 H1201" stroke="#7a7a7a" stroke-width="1.300"/>
 <!-- copy -->
 <circle cx="1177.500" cy="227" r="6.300" fill="#5f5f5f"/>
 <path d="M1185.500 226.500 H1192 Q1194 226.500 1194 228.500 V231.500" fill="none" stroke="#5f5f5f" stroke-width="1.500"/><path d="M1190.500 230.800 H1197.500 L1194 235.500Z" fill="#5f5f5f"/>
 <circle cx="1196" cy="243.500" r="5.800" fill="#4a88c6"/><circle cx="1185.500" cy="243.500" r="7" fill="#f2f2f2"/><circle cx="1185.500" cy="243.500" r="6.200" fill="#4a88c6"/>
 <!-- move -->
 <path d="M1186 258 L1192 265 H1188 V271 H1194 V267 L1201 273 L1194 279 V275 H1188 V281 H1192 L1186 288 L1180 281 H1184 V275 H1178 V279 L1171 273 L1178 267 V271 H1184 V265 H1180 Z" fill="#666"/>
 <rect x="1184.800" y="271.800" width="2.400" height="2.400" fill="#999"/>
 <!-- rotate head -->
 <path d="M1198.500 296 L1199 307.500 L1188 305Z" fill="#5f5f5f"/>
 <!-- scale fill -->
 <rect x="1171.500" y="349" width="14.500" height="14.300" fill="#5f5f5f"/>
 <!-- offset -->
 <g fill="none" stroke="#666" stroke-width="1.300"><path d="M1201 380.500 H1192 V374.500 H1181.500 V380.500 H1177 Q1171.700 380.500 1171.700 386 V393 Q1171.700 398.500 1177 398.500 H1201"/><path d="M1201 385.500 H1187.500 V379.500 H1186 V385.500 H1180 Q1177 385.500 1177 388 V391.500 Q1177 394 1180 394 H1201" stroke="#aaa"/></g>
 <!-- array blue -->
 <rect x="1171.700" y="427.200" width="12.600" height="12.300" fill="#f2f7fc" stroke="#6f93b8" stroke-width="1.300"/>
 <!-- mirror blue -->
 <path d="M1188 449.500 V477.500 H1200.500 Z" fill="#4a88c6"/>
 <!-- chamfer/fillet blue -->
 <path d="M1171.700 546.500 L1195 524.700" stroke="#7a9cc0" stroke-width="1.500"/>
 <path d="M1171.700 581 Q1172.500 563.500 1190 562.700" fill="none" stroke="#7a9cc0" stroke-width="1.500"/>
 <path d="M1184.500 614.500 H1201" stroke="#8fa9c8" stroke-width="1.800" stroke-dasharray="6 4"/>
 <path d="M1180 658 H1192" stroke="#8fa9c8" stroke-width="1.500" stroke-dasharray="3.500 2"/>
 <!-- 3d box -->
 <path d="M1173 685 L1180.500 677.500 H1200 L1192 685 Z" fill="#5f5f5f"/><rect x="1171.500" y="689.500" width="16.500" height="16.500" fill="#5f5f5f"/><path d="M1191.500 689 L1200.500 681.500 V698.500 L1191.500 706 Z" fill="#4a88c6"/>
 <rect x="1177" y="717" width="5" height="5" fill="#5b8ab8"/><rect x="1190" y="717" width="5" height="5" fill="#5b8ab8"/>
 <path d="M1179 761.500 L1185.500 767 L1179 772.500Z M1193 761.500 L1186.500 767 L1193 772.500Z" fill="#5b8ab8"/>
</svg>
<!-- layout tabs -->
<svg class="abs" style="left:0;top:863px" width="1120" height="18" viewBox="0 863 1120 18">
 <rect x="45" y="863" width="1075" height="18" fill="#f0f0f0"/>
 <rect x="45.500" y="864.500" width="15" height="15" fill="#f6f6f6" stroke="#d5d5d5"/><rect x="60.500" y="864.500" width="15" height="15" fill="#f6f6f6" stroke="#d5d5d5"/>
 <path d="M51.500 872.500 L56.500 868 V877Z M71 872.500 L66 868 V877Z" fill="#666"/>
 <path d="M78 864.500 L84.500 879.500 M119 879.500 L125.500 865.500 M163 865.500 L169 879.500 M209.500 879.500 L216 865.500" stroke="#222" stroke-width="1" fill="none"/>
</svg>
<span class="abs" style="left:89px;top:866px;font-size:12.200px;line-height:16px;white-space:nowrap;color:#1a1a1a">模型</span>
<span class="abs" style="left:128px;top:866px;font-size:12.200px;line-height:16px;white-space:nowrap;color:#1a1a1a">布局1</span>
<span class="abs" style="left:174px;top:866px;font-size:12.200px;line-height:16px;white-space:nowrap;color:#1a1a1a">布局2</span>
<!-- command area -->
<div class="abs cmdt" style="left:7px;top:886px;">命令<span class="l">: _ExportJpg</span></div>
<div class="abs cmdt" style="left:7px;top:920px;">指定图片范围或<span class="l"> [</span>全图<span class="l">(F)/</span>图片像素<span class="l">(P)]&lt;</span>全图<span class="l">&gt;:</span></div>
<svg class="abs" style="left:0;top:881px" width="1209" height="84" viewBox="0 881 1209 84">
 <!-- vertical scroll chevrons -->
 <path d="M1192 898.500 L1196 894.500 L1200 898.500 M1192 908.500 L1196 912.500 L1200 908.500" fill="none" stroke="#333" stroke-width="1.500"/>
 <!-- h scrollbar -->
 <rect x="1119" y="924" width="88" height="17" fill="#f0f0f0"/>
 <rect x="1134" y="925" width="17" height="15" fill="#cdcdcd"/>
 <path d="M1130 927.500 L1126 931.500 L1130 935.500 M1177 927.500 L1181 931.500 L1177 935.500" fill="none" stroke="#333" stroke-width="1.500"/>
 <!-- red annotation -->
 <rect x="6" y="881.500" width="289.500" height="56.500" rx="3.500" fill="none" stroke="#e3291c" stroke-width="2.200"/>
</svg>
<!-- watermark -->
<div class="abs" id="wm" style="left:851px;top:891px;font-size:35px;letter-spacing:0px;line-height:48px;white-space:nowrap;color:rgba(255,255,255,0.92);text-shadow:1px 1px 1px rgba(60,60,60,0.75), 2px 2px 3px rgba(60,60,60,0.55), 0 0 1px rgba(100,100,100,0.7);font-family:'Liberation Sans','Noto Sans CJK SC',sans-serif;">知乎 @CAD梦想画图</div>
<!-- status bar -->
<div class="abs" style="left:0;top:942px;width:1209px;height:21px;">
 <span class="st" style="left:4.500px">330.835377,</span><span class="st" style="left:81.500px">544.948907,</span><span class="st" style="left:158px">0.000000</span>
 <span class="st" style="left:675px">栅格</span><span class="st" style="left:711.500px">正交</span><span class="st" style="left:747px">极轴</span>
 <span class="stb" style="left:781px;width:58px">对象捕捉</span>
 <span class="stb" style="left:841px;width:58px">对象追踪</span>
 <span class="stb" style="left:900.500px;width:36.500px">DYN</span>
 <span class="st" style="left:941px">线宽</span>
 <span class="st" style="left:977px;color:#1515c0">提交软件问题或增加新功能</span>
 <div class="abs" style="left:1133px;top:1px;width:72px;height:19px;background:#f7f7f7"></div>
 <svg class="abs" style="left:1137px;top:3px" width="18" height="16" viewBox="0 0 18 16">
  <path d="M0.500 15 L3.800 1.500 H7 L6.500 15 Z M9.200 1.500 H13.500 L17 15 H8 Z" fill="#1fa594"/>
  <path d="M0 15 L14.500 5.500" stroke="#f4f4f4" stroke-width="1.300"/><path d="M8.300 1 L7.500 16" stroke="#f4f4f4" stroke-width="0.900"/><path d="M5 2 L4 15" stroke="#f4f4f4" stroke-width="0.700"/>
 </svg>
 <span class="st" style="left:1157px;font-size:12.500px;top:4px;color:#1a2030;letter-spacing:-0.100px;text-shadow:0 0 0.5px #1a2030">MxCAD</span>
</div>
<div id="canvas" class="abs">
<svg class="abs" style="left:0;top:0" width="1075" height="696" viewBox="45 167 1075 696">
<defs>
<pattern id="lawn" x="593" y="312" width="34.4" height="34.4" patternUnits="userSpaceOnUse"><g fill="none" stroke="#3cc458" stroke-width="0.85"><path d="M5.5 5 L8.600 8.500 L11.700 5 M8.600 3.500 V8.500"/><path d="M22.700 22.200 L25.800 25.700 L28.900 22.200 M25.800 20.700 V25.700"/></g></pattern>
</defs>
<g>
<polygon points="668,304 727,341 774,352 796,392 796,447 760,447 760,412 704,412 704,458 735,458 735,492 724,492 700,470 640,420 600,400 590,330 600,306 640,306 640,336 628,338 615,361 628,390 672,390 694,361 677,333 668,331" fill="url(#lawn)"/>
<polygon points="527,462 545,460 577,462 575,486 569,514 574,531 581,545 593,563 593,588 580,597 545,601 526,603 506,588 494,561 487,533 494,507 510,480 518,470" fill="url(#lawn)"/>
<polygon points="690,560 734,552 734,588 700,588 700,642 751,642 751,619 798,619 798,716 767,729 625,729 625,716 655,690 668,640 660,600 672,575" fill="url(#lawn)"/>
<polygon points="474,706 540,690 548,716 474,722" fill="url(#lawn)"/>
<polygon points="392,570 455,570 455,610 392,610" fill="url(#lawn)"/>
</g>
<path d="M238.3 336.4 L251.3 336.4 L303.6 285.7 L313.8 285.7 L313.8 222.8 L372.7 222.8 L390 210.7 L485.3 210.7 L485.3 233.9 L556.7 233.9 L556.7 189.5 L628.8 189.5 L628.8 283.3 L668.3 283.3 L734.5 321.8 L797.6 335.5 L828 389 L828 450.5 L866.6 450.5 L866.6 412.4 L920 412.4 L920 463.4 L903.6 463.4 L903.6 594.6 L920 594.6 L920 643.4 L866.8 643.4 L866.8 620.2 L828.2 620.2 L828.2 715.8 L761.3 754.2 L352.9 754.2 L352.9 710 L303.3 710 L303.3 654.9 L352.9 654.9 L352.9 544.5 L310.6 544.5 L310.6 463.5 L256.4 463.5 L256.4 380.6 L238.3 380.6 Z" fill="none" stroke="#cc2a22" stroke-width="5.2" stroke-linejoin="miter"/>
<path d="M238.3 336.4 L251.3 336.4 L303.6 285.7 L313.8 285.7 L313.8 222.8 L372.7 222.8 L390 210.7 L485.3 210.7 L485.3 233.9 L556.7 233.9 L556.7 189.5 L628.8 189.5 L628.8 283.3 L668.3 283.3 L734.5 321.8 L797.6 335.5 L828 389 L828 450.5 L866.6 450.5 L866.6 412.4 L920 412.4 L920 463.4 L903.6 463.4 L903.6 594.6 L920 594.6 L920 643.4 L866.8 643.4 L866.8 620.2 L828.2 620.2 L828.2 715.8 L761.3 754.2 L352.9 754.2 L352.9 710 L303.3 710 L303.3 654.9 L352.9 654.9 L352.9 544.5 L310.6 544.5 L310.6 463.5 L256.4 463.5 L256.4 380.6 L238.3 380.6 Z" fill="none" stroke="#4e100c" stroke-width="3" stroke-linejoin="miter"/>
<path d="M238.3 336.4 L251.3 336.4 L303.6 285.7 L313.8 285.7 L313.8 222.8 L372.7 222.8 L390 210.7 L485.3 210.7 L485.3 233.9 L556.7 233.9 L556.7 189.5 L628.8 189.5 L628.8 283.3 L668.3 283.3 L734.5 321.8 L797.6 335.5 L828 389 L828 450.5 L866.6 450.5 L866.6 412.4 L920 412.4 L920 463.4 L903.6 463.4 L903.6 594.6 L920 594.6 L920 643.4 L866.8 643.4 L866.8 620.2 L828.2 620.2 L828.2 715.8 L761.3 754.2 L352.9 754.2 L352.9 710 L303.3 710 L303.3 654.9 L352.9 654.9 L352.9 544.5 L310.6 544.5 L310.6 463.5 L256.4 463.5 L256.4 380.6 L238.3 380.6 Z" fill="none" stroke="#ffe6b0" stroke-width="1" stroke-linejoin="miter"/>
<path d="M275.6 443.6 L275.6 339.2 L319.5 295" fill="none" stroke="#cc2a22" stroke-width="4.8" stroke-linejoin="miter"/>
<path d="M275.6 443.6 L275.6 339.2 L319.5 295" fill="none" stroke="#4e100c" stroke-width="2.6" stroke-linejoin="miter"/>
<path d="M275.6 443.6 L275.6 339.2 L319.5 295" fill="none" stroke="#ffe6b0" stroke-width="1" stroke-linejoin="miter"/>
<path d="M319.5 294.5 L333.5 294.5 L333.5 248.7 L392.5 248.7 L409 221.8 L436 221.8 L436 248.5 L561.2 248.5 L561.2 305" fill="none" stroke="#d42a20" stroke-width="4" stroke-linejoin="miter"/>
<path d="M319.5 294.5 L333.5 294.5 L333.5 248.7 L392.5 248.7 L409 221.8 L436 221.8 L436 248.5 L561.2 248.5 L561.2 305" fill="none" stroke="#000" stroke-width="2" stroke-linejoin="miter"/>
<path d="M275.6 443.6 L329.5 443.6 L329.5 527 L374.3 527" fill="none" stroke="#cc2a22" stroke-width="4.8" stroke-linejoin="miter"/>
<path d="M275.6 443.6 L329.5 443.6 L329.5 527 L374.3 527" fill="none" stroke="#4e100c" stroke-width="2.6" stroke-linejoin="miter"/>
<path d="M275.6 443.6 L329.5 443.6 L329.5 527 L374.3 527" fill="none" stroke="#ffe6b0" stroke-width="1" stroke-linejoin="miter"/>
<path d="M374.3 525.7 L386.7 525.7 L386.7 543.5" fill="none" stroke="#cc2a22" stroke-width="4.8" stroke-linejoin="miter"/>
<path d="M374.3 525.7 L386.7 525.7 L386.7 543.5" fill="none" stroke="#4e100c" stroke-width="2.6" stroke-linejoin="miter"/>
<path d="M374.3 525.7 L386.7 525.7 L386.7 543.5" fill="none" stroke="#ffe6b0" stroke-width="1" stroke-linejoin="miter"/>
<path d="M386.7 565.5 L386.7 612.8 L457.6 612.8 L457.6 642.6" fill="none" stroke="#cc2a22" stroke-width="4.8" stroke-linejoin="miter"/>
<path d="M386.7 565.5 L386.7 612.8 L457.6 612.8 L457.6 642.6" fill="none" stroke="#4e100c" stroke-width="2.6" stroke-linejoin="miter"/>
<path d="M386.7 565.5 L386.7 612.8 L457.6 612.8 L457.6 642.6" fill="none" stroke="#ffe6b0" stroke-width="1" stroke-linejoin="miter"/>
<path d="M454.2 715.4 L454.2 731.3 L551.5 731.3" fill="none" stroke="#cc2a22" stroke-width="4.8" stroke-linejoin="miter"/>
<path d="M454.2 715.4 L454.2 731.3 L551.5 731.3" fill="none" stroke="#4e100c" stroke-width="2.6" stroke-linejoin="miter"/>
<path d="M454.2 715.4 L454.2 731.3 L551.5 731.3" fill="none" stroke="#ffe6b0" stroke-width="1" stroke-linejoin="miter"/>
<path d="M623.2 715.7 L623.2 731.3 L767.7 731.3 L800.2 716.9 L800.2 618.2 L750.4 618.2 L750.4 641.2 L700.8 641.2 L700.8 589 L736.8 589 L736.8 551" fill="none" stroke="#cc2a22" stroke-width="4.8" stroke-linejoin="miter"/>
<path d="M623.2 715.7 L623.2 731.3 L767.7 731.3 L800.2 716.9 L800.2 618.2 L750.4 618.2 L750.4 641.2 L700.8 641.2 L700.8 589 L736.8 589 L736.8 551" fill="none" stroke="#4e100c" stroke-width="2.6" stroke-linejoin="miter"/>
<path d="M623.2 715.7 L623.2 731.3 L767.7 731.3 L800.2 716.9 L800.2 618.2 L750.4 618.2 L750.4 641.2 L700.8 641.2 L700.8 589 L736.8 589 L736.8 551" fill="none" stroke="#ffe6b0" stroke-width="1" stroke-linejoin="miter"/>
<path d="M736.8 493.4 L736.8 461.5 L704.5 461.5 L704.5 413.6 L756.2 413.6 L756.2 448.6 L799.8 448.6 L799.8 391" fill="none" stroke="#cc2a22" stroke-width="4.8" stroke-linejoin="miter"/>
<path d="M736.8 493.4 L736.8 461.5 L704.5 461.5 L704.5 413.6 L756.2 413.6 L756.2 448.6 L799.8 448.6 L799.8 391" fill="none" stroke="#4e100c" stroke-width="2.6" stroke-linejoin="miter"/>
<path d="M736.8 493.4 L736.8 461.5 L704.5 461.5 L704.5 413.6 L756.2 413.6 L756.2 448.6 L799.8 448.6 L799.8 391" fill="none" stroke="#ffe6b0" stroke-width="1" stroke-linejoin="miter"/>
<path d="M666.9 300.5 L719.5 335.8 L776 347.5 L798 390.5 L798 447" fill="none" stroke="#d42a20" stroke-width="3.4" stroke-linejoin="miter"/>
<path d="M666.9 300.5 L719.5 335.8 L776 347.5 L798 390.5 L798 447" fill="none" stroke="#000" stroke-width="1.2" stroke-linejoin="miter"/>
<path d="M585.8 190.5 L585.8 275 L625.5 275" fill="none" stroke="#d42a20" stroke-width="4" stroke-linejoin="miter"/>
<path d="M585.8 190.5 L585.8 275 L625.5 275" fill="none" stroke="#000" stroke-width="2" stroke-linejoin="miter"/>
<path d="M585.8 226.8 L622.7 226.8" fill="none" stroke="#d42a20" stroke-width="4" stroke-linejoin="miter"/>
<path d="M585.8 226.8 L622.7 226.8" fill="none" stroke="#000" stroke-width="2" stroke-linejoin="miter"/>
<path d="M624.3 192.5 L624.3 281" fill="none" stroke="#d42a20" stroke-width="1" />
<path d="M584.7 299.2 L641 299.2" fill="none" stroke="#d42a20" stroke-width="1.1" />
<path d="M584.7 302.4 L639.5 302.4 L639.5 335.5 L629.5 336.7 L616.6 361.6 L628.3 388.5 L671.8 388.5 L692.9 361.6 L676.8 334.2 L666.8 331.7 L666.8 298.9" fill="none" stroke="#d42a20" stroke-width="1.1" />
<path d="M642.3 299.2 L642.3 337.5 L631.5 339 L619.6 361.6 L630 385.8 L670.3 385.8 L689.6 361.6 L675 337 L664.2 334.5 L664.2 298.9" fill="none" stroke="#d42a20" stroke-width="1.1" />
<path d="M752.2 460.8 L871.6 460.8 L871.6 593.9 L752.2 593.9 Z" fill="none" stroke="#d42a20" stroke-width="3.8" stroke-linejoin="miter"/>
<path d="M752.2 460.8 L871.6 460.8 L871.6 593.9 L752.2 593.9 Z" fill="none" stroke="#000" stroke-width="1.8" stroke-linejoin="miter"/>
<path d="M356 633.7 L427.2 633.7 L427.2 748" fill="none" stroke="#d42a20" stroke-width="4.8" stroke-linejoin="miter"/>
<path d="M356 633.7 L427.2 633.7 L427.2 748" fill="none" stroke="#000" stroke-width="2.8" stroke-linejoin="miter"/>
<path d="M508.6 756 L508.6 843.2 L677.6 843.2 L677.6 756" fill="none" stroke="#d02a20" stroke-width="1.1" />
<path d="M575 812.6 L628.9 812.6" fill="none" stroke="#d02a20" stroke-width="1" />
<path d="M575 815.3 L628.9 815.3" fill="none" stroke="#d02a20" stroke-width="1" />
<path d="M517 834.6 L667.8 834.6" fill="none" stroke="#d02a20" stroke-width="1" />
<path d="M517 837.3 L667.8 837.3" fill="none" stroke="#d02a20" stroke-width="1" />
<path d="M335.7 295 L335.7 252.9 L390 252.9 L409.5 225.8 L431 225.8 L431 252.9 L557 252.9 L557 299.4" fill="none" stroke="#4cc8c4" stroke-width="1" />
<path d="M335.7 295 L321 296 L279.5 340 L279.5 350" fill="none" stroke="#2aa0a0" stroke-width="1" />
<path d="M584.7 296.2 L644.5 296.2 L644.5 338 L632 339.4 L622 361.6 L632 385.2 L669.3 385.2 L685.5 361.6 L673 338.5 L663.1 338 L662.6 295.6 L721.5 331.3 L779 344.6 L802.2 389.6 L802.2 450.4 L758.4 450.4" fill="none" stroke="#5cd4cc" stroke-width="1" />
<polygon points="354.5,289.4 376.9,288.9 387.9,296.6 399.7,306.4 406.6,312.3 406.6,329.1 418.4,329.1 430.2,345.8 445,343.8 439.1,331 447.9,323.2 449.9,316.3 456.8,308.4 457.8,291.7 486.3,290.7 496.2,301.5 508,306.4 523.7,312.3 523.7,323.2 532.6,336.9 541.4,350.7 543.4,359.6 539.5,372.4 527.7,386.2 517.8,394 515.9,407.8 510.9,419.6 484.4,427.5 483.4,443.3 474.5,445.2 445,447.2 429.2,454.1 391.8,456.1 382,459.5 379.2,470.2 382.5,490 371,503 372.6,524 349.4,524 336,509.8 337.7,470 334.4,461.9 339.4,451.9 337.7,435.3 319.3,430 308.3,423.7 303.6,414.3 320.9,411.2 309.1,409.6 309.9,398.6 310.6,386 303.6,378.1 306.7,368.7 319.3,356.1 325.6,346.7 333.4,334.1 333.4,320 343.3,314.6 352.6,304.3" fill="#80ffff" stroke="#c8a040" stroke-width="0.9"/>
<circle cx="425.3" cy="506.6" r="23.3" fill="#ff1744"/>
<circle cx="424.8" cy="486.7" r="1.5" fill="#300" stroke="#f4c0c8" stroke-width="0.7"/>
<circle cx="440.2" cy="494.7" r="1.5" fill="#300" stroke="#f4c0c8" stroke-width="0.7"/>
<circle cx="438.5" cy="520.8" r="1.5" fill="#300" stroke="#f4c0c8" stroke-width="0.7"/>
<circle cx="408.6" cy="519.5" r="1.5" fill="#300" stroke="#f4c0c8" stroke-width="0.7"/>
<circle cx="408.6" cy="495.9" r="1.5" fill="#300" stroke="#f4c0c8" stroke-width="0.7"/>
<path d="M344.2 268.9 H349.8 M347 266.1 V271.6 M344.2 275.4 H349.8 M347 272.6 V278.1 M350.8 268.9 H356.5 M353.6 266.1 V271.6 M350.8 275.4 H356.5 M353.6 272.6 V278.1 M357.5 268.9 H363.1 M360.3 266.1 V271.6 M357.5 275.4 H363.1 M360.3 272.6 V278.1 M357.5 281.6 H363.1 M360.3 278.9 V284.4 M364.1 268.9 H369.8 M366.9 266.1 V271.6 M364.1 275.4 H369.8 M366.9 272.6 V278.1 M364.1 281.6 H369.8 M366.9 278.9 V284.4 M370.8 268.9 H376.4 M373.6 266.1 V271.6 M370.8 275.4 H376.4 M373.6 272.6 V278.1 M370.8 281.6 H376.4 M373.6 278.9 V284.4 M377.4 268.9 H383.1 M380.2 266.1 V271.6 M377.4 275.4 H383.1 M380.2 272.6 V278.1 M377.4 281.6 H383.1 M380.2 278.9 V284.4 M384.1 268.9 H389.7 M386.9 266.1 V271.6 M384.1 275.4 H389.7 M386.9 272.6 V278.1 M384.1 281.6 H389.7 M386.9 278.9 V284.4 M390.7 268.9 H396.4 M393.6 266.1 V271.6 M390.7 275.4 H396.4 M393.6 272.6 V278.1" fill="none" stroke="#3fe0e0" stroke-width="1.1"/>
<path d="M531.8 300.5 H537.2 M534.5 297.4 V303.6 M531.8 307.6 H537.2 M534.5 304.6 V310.7 M531.8 314.5 H537.2 M534.5 311.4 V317.6 M531.8 321.2 H537.2 M534.5 318.1 V324.2 M538.2 300.5 H543.8 M541 297.4 V303.6 M538.2 307.6 H543.8 M541 304.6 V310.7 M538.2 314.5 H543.8 M541 311.4 V317.6 M538.2 321.2 H543.8 M541 318.1 V324.2 M538.2 327.8 H543.8 M541 324.8 V330.9 M544.9 300.5 H550.4 M547.6 297.4 V303.6 M544.9 307.6 H550.4 M547.6 304.6 V310.7 M544.9 314.5 H550.4 M547.6 311.4 V317.6 M544.9 321.2 H550.4 M547.6 318.1 V324.2 M544.9 327.8 H550.4 M547.6 324.8 V330.9 M551.4 300.5 H556.9 M554.1 297.4 V303.6 M551.4 307.6 H556.9 M554.1 304.6 V310.7 M551.4 314.5 H556.9 M554.1 311.4 V317.6 M551.4 321.2 H556.9 M554.1 318.1 V324.2 M551.4 327.8 H556.9 M554.1 324.8 V330.9" fill="none" stroke="#3fe0e0" stroke-width="1.1"/>
<path d="M557.3 429.2 H565.7 M561.5 425.2 V433.1 M557.3 438.5 H565.7 M561.5 434.6 V442.4 M566.7 420.2 H575.1 M570.9 416.2 V424.1 M566.7 429.2 H575.1 M570.9 425.2 V433.1 M566.7 438.5 H575.1 M570.9 434.6 V442.4 M575.1 375.5 H583.5 M579.3 371.6 V379.4 M575.1 384.4 H583.5 M579.3 380.4 V388.3 M575.1 393.4 H583.5 M579.3 389.4 V397.3 M575.1 402.1 H583.5 M579.3 398.2 V406.1 M575.1 411.1 H583.5 M579.3 407.2 V415.1 M575.1 420.2 H583.5 M579.3 416.2 V424.1 M575.1 429.2 H583.5 M579.3 425.2 V433.1 M575.1 438.5 H583.5 M579.3 434.6 V442.4 M583.4 375.5 H591.8 M587.6 371.6 V379.4 M583.4 384.4 H591.8 M587.6 380.4 V388.3 M583.4 393.4 H591.8 M587.6 389.4 V397.3 M583.4 402.1 H591.8 M587.6 398.2 V406.1 M583.4 411.1 H591.8 M587.6 407.2 V415.1 M583.4 420.2 H591.8 M587.6 416.2 V424.1 M583.4 429.2 H591.8 M587.6 425.2 V433.1 M583.4 438.5 H591.8 M587.6 434.6 V442.4 M592.8 375.5 H601.2 M597 371.6 V379.4 M592.8 384.4 H601.2 M597 380.4 V388.3 M592.8 393.4 H601.2 M597 389.4 V397.3 M592.8 402.1 H601.2 M597 398.2 V406.1 M592.8 411.1 H601.2 M597 407.2 V415.1 M592.8 420.2 H601.2 M597 416.2 V424.1 M592.8 429.2 H601.2 M597 425.2 V433.1 M601.2 429.2 H609.6 M605.4 425.2 V433.1" fill="none" stroke="#3fe0e0" stroke-width="1.1"/>
<path d="M386.5 519 H394.3 M390.4 514.9 V523.1 M386.5 528.2 H394.3 M390.4 524.1 V532.3 M386.5 536.9 H394.3 M390.4 532.8 V541 M395.3 519 H403.1 M399.2 514.9 V523.1 M395.3 528.2 H403.1 M399.2 524.1 V532.3 M395.3 536.9 H403.1 M399.2 532.8 V541 M395.3 546.4 H403.1 M399.2 542.3 V550.5 M404.7 536.9 H412.5 M408.6 532.8 V541 M404.7 546.4 H412.5 M408.6 542.3 V550.5 M413.9 536.9 H421.7 M417.8 532.8 V541 M413.9 546.4 H421.7 M417.8 542.3 V550.5 M422.6 536.9 H430.4 M426.5 532.8 V541 M422.6 546.4 H430.4 M426.5 542.3 V550.5 M432.1 536.9 H439.9 M436 532.8 V541 M432.1 546.4 H439.9 M436 542.3 V550.5 M440.5 536.9 H448.3 M444.4 532.8 V541 M440.5 546.4 H448.3 M444.4 542.3 V550.5" fill="none" stroke="#3fe0e0" stroke-width="1.1"/>
<path d="M637 466 H645.4 M641.2 461.9 V470.1 M637 474.2 H645.4 M641.2 470.1 V478.3 M637 483.4 H645.4 M641.2 479.3 V487.5 M637 492.1 H645.4 M641.2 488 V496.2 M637 501.3 H645.4 M641.2 497.2 V505.4 M637 510.3 H645.4 M641.2 506.2 V514.4 M637 519.5 H645.4 M641.2 515.4 V523.6 M637 528.7 H645.4 M641.2 524.6 V532.8 M637 537.4 H645.4 M641.2 533.3 V541.5 M646.4 474.2 H654.8 M650.6 470.1 V478.3 M646.4 483.4 H654.8 M650.6 479.3 V487.5 M646.4 492.1 H654.8 M650.6 488 V496.2 M646.4 501.3 H654.8 M650.6 497.2 V505.4 M646.4 510.3 H654.8 M650.6 506.2 V514.4 M646.4 519.5 H654.8 M650.6 515.4 V523.6 M646.4 528.7 H654.8 M650.6 524.6 V532.8 M646.4 537.4 H654.8 M650.6 533.3 V541.5 M655.2 483.4 H663.6 M659.4 479.3 V487.5 M655.2 492.1 H663.6 M659.4 488 V496.2 M655.2 501.3 H663.6 M659.4 497.2 V505.4 M655.2 510.3 H663.6 M659.4 506.2 V514.4 M655.2 519.5 H663.6 M659.4 515.4 V523.6 M655.2 528.7 H663.6 M659.4 524.6 V532.8 M655.2 537.4 H663.6 M659.4 533.3 V541.5 M664.4 492.1 H672.8 M668.6 488 V496.2 M664.4 501.3 H672.8 M668.6 497.2 V505.4 M664.4 510.3 H672.8 M668.6 506.2 V514.4 M664.4 519.5 H672.8 M668.6 515.4 V523.6 M664.4 528.7 H672.8 M668.6 524.6 V532.8 M664.4 537.4 H672.8 M668.6 533.3 V541.5 M673.6 501.3 H682 M677.8 497.2 V505.4 M673.6 510.3 H682 M677.8 506.2 V514.4 M673.6 519.5 H682 M677.8 515.4 V523.6 M673.6 528.7 H682 M677.8 524.6 V532.8 M673.6 537.4 H682 M677.8 533.3 V541.5 M673.6 546.4 H682 M677.8 542.3 V550.5 M682.5 510.3 H690.9 M686.7 506.2 V514.4 M682.5 519.5 H690.9 M686.7 515.4 V523.6 M682.5 528.7 H690.9 M686.7 524.6 V532.8 M682.5 537.4 H690.9 M686.7 533.3 V541.5 M682.5 546.4 H690.9 M686.7 542.3 V550.5 M691.7 519.5 H700.1 M695.9 515.4 V523.6 M691.7 528.7 H700.1 M695.9 524.6 V532.8 M691.7 537.4 H700.1 M695.9 533.3 V541.5 M691.7 546.4 H700.1 M695.9 542.3 V550.5 M700.7 528.7 H709.1 M704.9 524.6 V532.8 M700.7 537.4 H709.1 M704.9 533.3 V541.5 M709.4 537.4 H717.8 M713.6 533.3 V541.5" fill="none" stroke="#3fe0e0" stroke-width="1.1"/>
<path d="M610.8 597.9 H618.5 M614.6 593.5 V602.3 M619.5 597.9 H627.1 M623.3 593.5 V602.3 M619.5 607.8 H627.1 M623.3 603.3 V612.2 M619.5 617.3 H627.1 M623.3 612.8 V621.8 M628.7 597.9 H636.3 M632.5 593.5 V602.3 M628.7 607.8 H636.3 M632.5 603.3 V612.2 M628.7 617.3 H636.3 M632.5 612.8 V621.8 M628.7 626.5 H636.3 M632.5 622 V631 M637.4 597.9 H645 M641.2 593.5 V602.3 M637.4 607.8 H645 M641.2 603.3 V612.2 M637.4 617.3 H645 M641.2 612.8 V621.8 M637.4 626.5 H645 M641.2 622 V631 M637.4 635.2 H645 M641.2 630.8 V639.7 M637.4 643.9 H645 M641.2 639.5 V648.3 M646.2 597.9 H653.8 M650 593.5 V602.3 M646.2 607.8 H653.8 M650 603.3 V612.2" fill="none" stroke="#3fe0e0" stroke-width="1.1"/>
<path d="M469.8 651.1 H475.8 M472.8 648.3 V653.9 M469.8 657.6 H475.8 M472.8 654.9 V660.4 M469.8 664.2 H475.8 M472.8 661.4 V666.9 M469.8 670.7 H475.8 M472.8 667.9 V673.5 M469.8 677.2 H475.8 M472.8 674.5 V680 M469.8 683.8 H475.8 M472.8 681 V686.6 M469.8 690.3 H475.8 M472.8 687.6 V693.1 M469.8 696.9 H475.8 M472.8 694.1 V699.6 M469.8 703.4 H475.8 M472.8 700.6 V706.2 M476.8 651.1 H482.7 M479.7 648.3 V653.9 M476.8 657.6 H482.7 M479.7 654.9 V660.4 M476.8 664.2 H482.7 M479.7 661.4 V666.9 M476.8 670.7 H482.7 M479.7 667.9 V673.5 M476.8 677.2 H482.7 M479.7 674.5 V680 M476.8 683.8 H482.7 M479.7 681 V686.6 M476.8 690.3 H482.7 M479.7 687.6 V693.1 M476.8 696.9 H482.7 M479.7 694.1 V699.6 M476.8 703.4 H482.7 M479.7 700.6 V706.2 M483.7 651.1 H489.6 M486.7 648.3 V653.9 M483.7 657.6 H489.6 M486.7 654.9 V660.4 M483.7 664.2 H489.6 M486.7 661.4 V666.9 M483.7 670.7 H489.6 M486.7 667.9 V673.5 M483.7 677.2 H489.6 M486.7 674.5 V680 M483.7 683.8 H489.6 M486.7 681 V686.6 M483.7 690.3 H489.6 M486.7 687.6 V693.1 M490.6 651.1 H496.6 M493.6 648.3 V653.9 M490.6 657.6 H496.6 M493.6 654.9 V660.4 M490.6 664.2 H496.6 M493.6 661.4 V666.9 M490.6 670.7 H496.6 M493.6 667.9 V673.5 M490.6 677.2 H496.6 M493.6 674.5 V680 M490.6 683.8 H496.6 M493.6 681 V686.6 M497.5 651.1 H503.5 M500.5 648.3 V653.9 M497.5 657.6 H503.5 M500.5 654.9 V660.4 M497.5 664.2 H503.5 M500.5 661.4 V666.9 M497.5 670.7 H503.5 M500.5 667.9 V673.5 M497.5 677.2 H503.5 M500.5 674.5 V680 M504.5 651.1 H510.4 M507.4 648.3 V653.9 M504.5 657.6 H510.4 M507.4 654.9 V660.4 M504.5 664.2 H510.4 M507.4 661.4 V666.9 M504.5 670.7 H510.4 M507.4 667.9 V673.5 M504.5 677.2 H510.4 M507.4 674.5 V680 M511.4 651.1 H517.3 M514.4 648.3 V653.9 M511.4 657.6 H517.3 M514.4 654.9 V660.4 M511.4 664.2 H517.3 M514.4 661.4 V666.9 M511.4 670.7 H517.3 M514.4 667.9 V673.5 M511.4 677.2 H517.3 M514.4 674.5 V680 M518.3 651.1 H524.3 M521.3 648.3 V653.9 M518.3 657.6 H524.3 M521.3 654.9 V660.4 M518.3 664.2 H524.3 M521.3 661.4 V666.9 M518.3 670.7 H524.3 M521.3 667.9 V673.5 M518.3 677.2 H524.3 M521.3 674.5 V680" fill="none" stroke="#3fe0e0" stroke-width="1.1"/>
<path d="M276.5 447.5 V461 M279.4 447.5 V461 M282.3 447.5 V461 M285.2 447.5 V461 M288.2 447.5 V461 M291.1 447.5 V461 M294 447.5 V461 M296.9 447.5 V461 M299.8 447.5 V461 M302.8 447.5 V461 M305.7 447.5 V461 M308.6 447.5 V461 M311.5 447.5 V461" stroke="#1f2fe0" stroke-width="1.1" fill="none"/>
<rect x="246" y="432" width="6" height="19" fill="#101090"/>
<path d="M246 432 V451 M249 432 V451 M252 432 V451" stroke="#2222e0" stroke-width="1.2" fill="none"/>
<path d="M244 431 L254 431" fill="none" stroke="#d42a20" stroke-width="1" />
<path d="M244 452 L254 452" fill="none" stroke="#d42a20" stroke-width="1" />
<rect x="337.7" y="268" width="7.500" height="12" fill="#1030e0"/>
<path d="M562.3 296.9 H583.5 M562.3 303.6 H583.5" stroke="#2222e0" stroke-width="1.1" fill="none"/>
<g transform="rotate(-25 610.3 381)"><rect x="601.5" y="366.4" width="17.500" height="29.200" fill="#0a0a6a"/>
<path d="M602.5 366.4 V395.6 M605.1 366.4 V395.6 M607.7 366.4 V395.6 M610.2 366.4 V395.6 M612.8 366.4 V395.6 M615.4 366.4 V395.6 M618 366.4 V395.6" stroke="#2430c8" stroke-width="0.9" fill="none"/>
</g>
<rect x="725.3" y="494.6" width="6.4" height="53.5" fill="#0a0a78"/>
<path d="M725.8 494.6 V548.1 M728.5 494.6 V548.1 M731.2 494.6 V548.1" stroke="#2222e0" stroke-width="1.3" fill="none"/>
<path d="M723.5 493.6 L737 493.6" fill="none" stroke="#d42a20" stroke-width="1.2" />
<path d="M723.5 549.3 L737 549.3" fill="none" stroke="#d42a20" stroke-width="1.2" />
<rect x="460.5" y="651" width="11.5" height="59" fill="#0a0a78"/>
<path d="M461.5 651 V710 M464.7 651 V710 M467.8 651 V710 M471 651 V710" stroke="#2222e0" stroke-width="1.3" fill="none"/>
<path d="M459 649.8 L473 649.8" fill="none" stroke="#d42a20" stroke-width="1.2" />
<path d="M459 711 L473 711" fill="none" stroke="#d42a20" stroke-width="1.2" />
<path d="M556.2 719.6 H621 M556.2 722.3 H621 M556.2 724.9 H621 M556.2 727.6 H621" stroke="#2222e0" stroke-width="1.3" fill="none"/>
<path d="M802.8 624.7 H823.5 M802.8 628.6 H823.5 M802.8 632.5 H823.5 M802.8 636.3 H823.5 M802.8 640.2 H823.5 M802.8 644.1 H823.5 M802.8 648 H823.5 M802.8 651.8 H823.5 M802.8 655.7 H823.5 M802.8 659.6 H823.5" stroke="#b838d8" stroke-width="1.2" fill="none"/>
<path d="M579.8 441.5 L600 433 L607 425 L625.8 422" fill="none" stroke="#30c030" stroke-width="1" />
<path d="M579.8 444.6 L600 436.1 L607 428.1 L625.8 425.1" fill="none" stroke="#30c030" stroke-width="1" />
<path d="M579.8 447.7 L600 439.2 L607 431.2 L625.8 428.2" fill="none" stroke="#30c030" stroke-width="1" />
<path d="M579.8 450.8 L600 442.3 L607 434.3 L625.8 431.3" fill="none" stroke="#30c030" stroke-width="1" />
<path d="M579.8 453.9 L600 445.4 L607 437.4 L625.8 434.4" fill="none" stroke="#30c030" stroke-width="1" />
<path d="M600.9 570.5 L612 576.8 L628 573 L651.9 575.5" fill="none" stroke="#30c030" stroke-width="1" />
<path d="M600.9 576.7 L612 583 L628 579.2 L651.9 581.7" fill="none" stroke="#30c030" stroke-width="1" />
<path d="M600.9 582.9 L612 589.2 L628 585.4 L651.9 587.9" fill="none" stroke="#30c030" stroke-width="1" />
<path d="M600.9 589.1 L612 595.4 L628 591.6 L651.9 594.1" fill="none" stroke="#30c030" stroke-width="1" />
<path d="M600.9 595.3 L612 601.6 L628 597.8 L651.9 600.3" fill="none" stroke="#30c030" stroke-width="1" />
<path d="M511 420 L506 425.5 L502.1 433.4 L513.9 438.3 L503 450.2 L496.2 450.2 L496.2 461 L483.7 466 L483.7 476 L462.6 481 L460.1 488.4 L447.7 487.2 L446.4 494.6" fill="none" stroke="#30c030" stroke-width="1" />
<path d="M468 503 L500 470 L468 503" fill="none" stroke="#30a030" stroke-width="0" />
<path d="M518.5 456.7 L519.6 453.9 L523.5 452.2 L526.7 454.3 L527.5 457.1 L524.5 458.6 L520.7 459.3 Z M526.7 451.4 L534 451.5 L537.3 456 L531.8 459.3 M534.1 454.5 L535.3 451.5 L539.8 451.1 L542.9 453.4 L540.6 456 L536.8 457 Z M543.1 455.3 L545 452.4 L550 453.2 L550.4 457.2 M556.1 452.4 L556.5 456.9 L550.1 458.2 L546 454.3 L550.5 451 Z M564.4 458.9 L559.7 460.6 L554 459.5 L554.8 455.5 L557.6 453.4 L561.8 452.6 L565.4 455.2 Z M562.7 458 L557.7 453.7 L563.1 450.8 L569.1 450.9 L567.9 455.2 Z M573.3 460.5 L570 459.5 L568.6 457.1 L569.9 453.9 L575.5 452.6 L579.9 455.9 L577.1 459.5 Z M587.9 458.1 L585.5 461.2 L581.5 462.1 L578.3 459.9 L579.2 456.7 L583.8 455.9 Z M578.3 463.3 L583.8 462.1 L586.4 465.5 L584.6 468.4 L580.6 469.1 M580.4 469.6 L583.4 468 L586.4 469.8 L587.2 472.7 L583.8 474.2 L579.8 474.4 L577.5 471.6 Z M575.5 477.3 L580.7 475.7 L583.5 479.1 L582.3 482.3 L577.2 484.4 L572.4 481.1 Z M579.2 482.5 L583.4 481.8 L586.7 484.5 L584.5 487.4 L580.8 488.8 L576.2 487.9 L575.3 484.2 Z M572.6 496.5 L575.7 492.5 L580.8 492 L583.7 495.7 L578.8 499.3 Z M572.8 502.5 L570.1 498.4 L573.8 494.6 L578.8 497.1 L579.4 501.5 Z M576.7 504.9 L579.4 506.4 L579.4 509.1 L576.4 510.7 L572.7 509.9 L569.9 507.4 L573.5 505.5 Z M569 513.9 L574.9 511.2 L579.1 514 L581.1 517.3 L576.9 520.6 M581 523 L580.4 525.8 L576.7 526.5 L571.6 526.4 L571.5 522.6 L575 520.6 L580 519.3 Z M576.2 532.9 L573.7 531 L574.3 528.6 L576.8 526.4 L580.4 527.7 L581.1 530.2 M586.1 540 L580.7 539.5 L578.5 536.9 L581.6 534.5 L587 535.4 Z M591 543.5 L587.9 545.5 L583.3 545 L582.6 541.5 L586 539.2 L591.2 539.8 Z M588.7 551 L589.7 547.8 L594.5 548.8 L594.9 552.2 L590.9 553 Z M599.7 563.4 L596.2 562.7 L593.9 560.3 L596.5 557.6 L600.8 558.6 L601.5 561.2 Z M596.4 566.3 L601.1 564 L602.8 567.9 L602.7 571.6 L596.9 572.6 M598.7 571.3 L602.3 571.2 L603.6 573.9 L601.5 576.8 L596.4 576.3 M605.2 579.9 L604 584.4 L597.8 584.2 L596.1 580.6 L600.1 578.7 Z M602.6 593.6 L597.4 592.8 L594.9 590.7 L596.4 588 L601.2 586 L603 589.8 Z M587.1 596.2 L589.8 593.3 L593.7 592.3 L596.6 594.2 L599.8 597.4 L595 599.6 L590.2 599.1 Z M579.8 604.1 L576.4 601.7 L578.9 599 L582.1 598 L585.4 599.1 L587.1 601.8 L584.4 604.5 Z M577 602.1 L575.5 604.7 L571.3 606.6 L567.8 603.6 L569.2 599.7 L574.3 599.9 Z M561.3 601.8 L567.5 603 L569 606.2 L565.5 609.6 L559.3 607 Z M558.2 603.4 L561.7 604.3 L562.6 607.6 L558.1 609.3 L554.5 607.2 L554 604 Z M556.2 604.3 L556.8 607.4 L553.9 610.4 L549.8 608.2 L548 605.1 L552.1 603.4 Z M542.1 604.6 L545.9 602.3 L550.8 603.8 L551.5 607.4 L548.7 609.9 L544 610.6 L540.2 608 Z M543.4 607.1 L544 611.5 L538.6 611.9 L535.6 609.6 M537.1 604.1 L537.5 607.6 L537 611 L532.2 610.7 L528.9 609.1 L528.2 605.8 L532.4 604.9 Z M526.7 606.1 L529.4 607.4 L531.1 609.4 L529.3 611.5 L526 611.3 L522.5 610.1 L522.8 607 Z M517 599 L523.7 597.9 L525.5 603.6 L518.8 604.6 L512.3 602.7 Z M513.5 596.5 L518.1 596.5 L519.3 599.3 L520.6 602.2 L516.3 602.8 L512.8 602.1 L511.8 599.4 Z M506.8 593.5 L508.8 591.3 L512.8 591.8 L513.5 594.4 L513.5 597.4 L509.1 597.9 M496.5 590.2 L496.6 587.5 L499.1 585.1 L504 585.1 L506.3 588.4 L503.2 590.8 L499.8 591.6 Z M494.6 584 L495.4 581.1 L497.3 579 L500.6 580.1 L502.4 582.7 L498.8 584.3 Z M486.8 575.2 L491.5 572.5 L496.4 571.6 L499.6 575.1 L496.5 578.5 L490.5 579.3 Z M494.3 564.5 L497.3 567.9 L494.4 570.7 L490.1 571.5 L487.8 568.7 L488.9 565.3 Z M490.4 557.3 L492.5 561.3 L487.9 564.9 L483.2 561.6 L483.5 556.7 Z M480.3 554.6 L481.7 551.2 L486.2 551.6 L490.9 551.9 L491.1 555.6 L487.4 557.7 L483 557.4 Z M486.2 545.5 L484.6 548 L482.8 549.4 L479.5 549.5 L479 547.1 L479.6 545 M474.7 539.5 L479.3 537.6 L484.5 537.5 L485.7 541.4 L481.6 543.1 L476.5 543.5 Z M486.9 533.9 L484.6 536.3 L480.5 536.6 L476.8 534 L480.4 531.2 M476.5 527.3 L479.6 524 L484.7 524.1 L487.9 527.2 L484.7 530.1 M483.4 522.8 L479.3 520.2 L478.7 517 L481.6 514.5 L487 513.4 L490.1 517.1 L487.3 520.2 Z M489.3 514.7 L485.3 514 L484.9 511.4 L487.9 510.1 L490.7 511.8 Z M492.2 504.5 L488.4 506.4 L484.9 505.5 L482.6 503 L485.3 499.8 L490.9 500.7 Z M490.5 499.6 L489.3 497 L492.3 494 L496 496.7 L495.6 500.6 Z M502.2 491.9 L500.2 495 L496 493.4 L495.4 490.9 L497.1 488.6 L500.5 489.6 Z M502.4 487.1 L501.4 489.3 L497.7 489.6 L496.7 487.1 L496 484.4 L499.7 483.9 M503.7 476.3 L507.3 474.5 L509.5 477.2 L510.3 479.5 L507.7 481.4 L504 481.1 M511.5 471.6 L515.5 475.2 L511.1 478.3 L506 478.4 L504 475.1 L505.5 471.1 Z M517.1 464.8 L518.3 468.6 L513.3 469.5 L509.8 469.4 L506.2 467.3 L507.9 463.7 L512.7 464.1 Z M523.9 462.7 L520.1 463.9 L516.3 464.3 L513 461.8 L515.2 458.6 L519.8 456.8 L522 460.1 Z" fill="none" stroke="#a07e4a" stroke-width="0.85"/>
<path d="M336 258.9 L341.9 257.9 L345.9 260.8 L353.8 259.9 L359.8 256.9 L367.7 258.9 L375.7 263.8 L385.6 264.8 L391.5 261.8 L399.5 265.8 L403.4 265.8 L399.5 269.8 L393.5 267.8" fill="none" stroke="#b89058" stroke-width="0.9" />
<path d="M409.4 266.8 L415.4 271.8 L413.4 275.7 L423.3 277.7 L427.3 282.7 L431.2 276.7 L439.2 278.7 L445.1 272.8 L451.1 270.8 L449.1 276.7 L441.2 282.7" fill="none" stroke="#b89058" stroke-width="0.9" />
<path d="M469 259.9 L472.9 264.8 L480.9 263.8 L488.8 258.9 L498.7 257.9 L504.7 261.8 L500.7 266.8 L508.7 264.8 L516.6 262.8 L518.6 267.8 L528.5 268.8 L532.5 266.8 L530.5 272.8 L514.6 269.8" fill="none" stroke="#b89058" stroke-width="0.9" />
<path d="M543.4 269.8 L546.4 274.7 L554.3 276.7 L557.3 269.8 L548.4 268.8 L543.4 269.8" fill="none" stroke="#b89058" stroke-width="0.9" />
<path d="M540.4 271.8 L543.4 277.7" fill="none" stroke="#b89058" stroke-width="0.9" />
<path d="M338.9 282.7 L340.9 287.6 L337.9 292.6 L339.9 297.6" fill="none" stroke="#b89058" stroke-width="0.9" />
<path d="M423.3 277.7 L420.3 280.7" fill="none" stroke="#b89058" stroke-width="0.9" />
<path d="M500.7 266.8 L497.7 268.8" fill="none" stroke="#b89058" stroke-width="0.9" />
<path d="M375.7 263.8 L372.7 266.8" fill="none" stroke="#b89058" stroke-width="0.9" />
<path d="M320.9 295.9 L317.2 303.4 L320.9 309 L313.5 311.8 L307.9 320.2 L310.7 327.6 L302.3 333.2 L305.1 341.6 L295.8 344.4 L291.1 353.8 L293 361.2 L283.6 366.8 L279.9 374.3 L285.5 379.9" fill="none" stroke="#a07e4a" stroke-width="0.9" />
<path d="M336.8 282.9 L341.5 288.5 L339.6 295.9 L324.7 301.5 L319.1 303.4" fill="none" stroke="#a07e4a" stroke-width="0.9" />
<path d="M289.2 331.4 L302.3 333.2" fill="none" stroke="#a07e4a" stroke-width="0.9" />
<path d="M279 340.7 L291.1 341.6 L295.8 344.4" fill="none" stroke="#a07e4a" stroke-width="0.9" />
<path d="M279 361.2 L293 361.2" fill="none" stroke="#a07e4a" stroke-width="0.9" />
<path d="M320.9 309 L328.4 307.1" fill="none" stroke="#a07e4a" stroke-width="0.9" />
<path d="M307.9 320.2 L298.6 322.1 L289.2 331.4 L281.8 337" fill="none" stroke="#a07e4a" stroke-width="0.9" />
<path d="M279.9 394.8 L283.6 400.4 L282.7 407.8 L279 411.6" fill="none" stroke="#a07e4a" stroke-width="0.9" />
<path d="M279 364.9 L282.7 368.7 L281.8 376.1 L279 378.9" fill="none" stroke="#a07e4a" stroke-width="0.9" />
<path d="M305.1 341.6 L311.6 344.4" fill="none" stroke="#a07e4a" stroke-width="0.9" />
<path d="M310.7 327.6 L319.1 324.8" fill="none" stroke="#a07e4a" stroke-width="0.9" />
<path d="M291.1 353.8 L298.6 356.6" fill="none" stroke="#a07e4a" stroke-width="0.9" />
<path d="M569.8 309.6 L568.8 312.4 L565.1 311.6 L562.1 310.7 L562.1 308.1 L565.3 307.4 L568.3 307.5 Z M570.3 319.1 L567.3 321.9 L562.3 319.5 L565.6 316.7 M569.9 323.9 L573.3 325.7 L573.1 328.5 L569 328.9 M574.6 331.1 L572.9 335.8 L568 337.3 L563 334.2 M567.6 344.3 L566.9 340.6 L569.4 337.4 L573.7 339.8 L573 343.3 Z M572.5 344.4 L577.7 344.4 L577.2 348.6 L572.5 348.6 L569.9 346.6 Z M582.8 357.6 L582.5 360.9 L577.4 362.3 L574.8 359.1 L573.7 356 L577.8 355 L581.7 354.9 Z M584 368.3 L579.8 368.6 L577.4 366.9 L577.9 364.6 L581.2 362.6 L584.5 365 Z M583.8 366.2 L585.3 363.7 L589.5 362.8 L590 365.9 L587.3 368.6 Z M595.3 367.4 L597.5 369.7 L599.2 372.3 L595.4 373.4 L591.3 374.1 L589.7 371.1 L590.5 367.7 Z" fill="none" stroke="#a07e4a" stroke-width="0.85"/>
<path d="M387.6 560.5 L390.1 557.1 L396.1 556.5 L395.6 560.6 L392 563.2 Z M404.1 559.3 L405.2 562.4 L402.5 564.5 L398 564.6 L396.8 561.4 L399.4 558.6 Z M401.1 560.8 L405 559.9 L408.5 561.7 L409.8 566.2 L403.3 566.3 M409.8 560 L414.9 559.8 L417.4 563.8 L412 566.7 L408.4 563.3 Z M421.4 565.8 L417 565.6 L415.2 562.6 L419.1 561.4 L423.3 562.5 Z M429.8 563.5 L428.5 567.7 L423 567.3 L418.8 565 L419.9 560.5 L426 560.9 Z M429.1 565 L431.1 562.1 L434.8 563.3 L436.8 566.3 L432.1 567.3 Z M440.3 560.5 L441.2 564.4 L435.9 566.2 L430.5 564.4 L432.4 560.6 L436.1 558.7 Z M437.3 565 L438.3 560.2 L444.8 559.4 L446.9 563.4 M452.7 560.8 L450.4 561.9 L447.3 562.1 L445.2 560 L446.7 557.5 L450.1 557.8 M456.3 566 L456.5 563.4 L459.8 562.2 L463.6 563 L463.7 565.8 L461.4 567.2 M469.9 570 L468.7 573.4 L463.6 572.9 L462.1 569.3 M474.2 582.3 L468.7 582.2 L465.8 578.9 L467.7 574.7 L474.8 574.1 L475.9 578.7 Z M477.5 583.3 L479.2 587 L474.7 589.6 L469.7 588 L469 584.4 L472.6 581.6 Z M481.7 589.5 L479.7 592.1 L475.7 592.6 L471.4 591 L473.3 588 L475.9 585.2 M478 592.3 L483.2 591.1 L485.3 594.9 L481.4 597.6 L477.2 595.6 Z M487.2 598.2 L487.8 601.4 L486.1 604.2 L481.7 603.5 L479 600.6 L482 597.2 Z M492.3 601.2 L492.4 604.4 L491.9 606.9 L488.3 607.7 L484.1 606.6 L484.2 603.2 L487.8 601.7 Z M491.6 612.4 L484.5 610.5 L487.3 606 L492.8 604.5 M498.2 617.2 L494.2 616.4 L491.6 614.3 L492.7 611.3 L496.7 610.1 L500.1 611.9 L500.4 614.7 Z M498.2 626.2 L494.7 627.1 L491.4 625.1 L492 621.6 L496.4 621.8 L500.7 621.4 L500.9 624.6 Z M503.1 626.9 L502.4 630.6 L497.4 631.1 L495.1 627.9 L498.5 625 Z M497.5 636.4 L497.6 633.2 L501.9 632.3 L507.5 632.2 L506.6 636.1 L504.9 639.4 M503.5 637.8 L508.3 635.5 L510.1 639.4 L507.7 642.6 L503.5 640.7 Z" fill="none" stroke="#a07e4a" stroke-width="0.85"/>
<path d="M625.1 443.8 L625.5 438.9 L631 436.7 L634.8 440.2 L632.5 444.7 Z M638.4 448.2 L632.7 446.5 L627.9 444 L632.4 441.2 L637.7 439.8 L639.9 443.7 Z M641.8 444.6 L641.8 441.8 L646 441.4 L647.4 443.9 L647.9 446 L645.2 446.9 L642.4 446.6 Z M645.8 450.7 L647.6 448 L652.1 449.1 L651.6 452.5 L647.2 453.5 Z M655.2 457 L651.4 455.4 L651.9 452.5 L654.2 450.9 L657.3 451.1 L659.2 452.9 L658.3 455.2 Z M664.2 459.2 L662.6 462.1 L658.9 460.5 L657.4 458.2 L659.6 455.4 L664.5 455.9 Z M660.5 467.1 L659.9 463.9 L661.3 461.2 L665.4 461.8 L667.3 464.3 M666.3 475.1 L663.8 473.2 L665.5 470.4 L669.2 471.3 L671.6 472.3 L672.6 474.9 L669.1 475.9 Z" fill="none" stroke="#a07e4a" stroke-width="0.85"/>
<path d="M675.6 492.6 L682.6 492.3 L684.1 497.1 L678.8 498.9 M685.6 494.9 L687.8 493.7 L690.3 494.7 L692.5 496.9 L689.8 499.2 L685.8 499.2 L683.2 496.9 Z M690.6 503.3 L693.7 500.1 L698.5 501.1 L698.8 504.5 L694.5 505.9 Z M696.2 502.8 L702.1 503 L702.4 506.9 L700.4 510.5 L695 509.4 L693.9 506 Z M706.4 508.9 L703.1 506.5 L703 503.5 L706.2 501.5 L710.8 501.5 L712.7 504.7 L709.8 506.8 Z M717.7 506 L717.6 508.1 L714.8 510 L711.2 508.1 L712 505.1 L715.6 504.7 Z M722.1 505.8 L728.2 507.6 L728.4 512.4 L721.5 514.3 L717.7 509.7 Z M717.1 514.3 L719.5 512.6 L722.4 514 L723.3 516 L721.6 517.5 L718.6 518.5 L717.2 516.4 Z" fill="none" stroke="#a07e4a" stroke-width="0.85"/>
<path d="M718.8 552.4 L713.7 550.1 L716.7 545.8 L722.5 547 L724.4 551.1 Z M716.1 549.5 L713.5 546.9 L716.7 544.4 L720.4 545.6 L722.6 547.9 L720 550.5 Z M711.2 553.3 L708 550 L709.9 546.5 L715.9 546.6 L716.9 551.2 Z M703.8 554.4 L707.1 553.9 L711.7 554.5 L711 557.9 L707.6 559.3 L703.7 559.4 M699.3 556.3 L695.7 553.8 L697.8 550 L704.3 550.4 L705 555.3 Z M692.2 556.1 L693.7 553 L697.9 553.5 L700.9 555.5 L698.7 558 M678 559.2 L679.6 555.9 L682.8 552.9 L686.3 555.7 L689.6 558 L686.4 560.5 L682.3 561.1 Z M683.3 560.5 L679.9 561.8 L677.1 560 L677.4 557.6 L680.6 555.4 M683.1 562.7 L680 566.6 L674.5 564.6 L674.5 560.7 L680.3 558.4 Z M671.2 568 L673.7 569.7 L675.5 571.6 L673 573.1 L670 573.6 L668.4 571.8 L668.6 569.7 Z M667.9 576.8 L662.5 573 L664.6 568.7 L670.5 568.8 L671.9 572.6 Z M665 575.3 L660.5 574.8 L658.1 573.2 L657.9 570.2 L662.4 569.6 L665.2 571.9 Z M653.6 581.2 L658.2 581 L659.3 584.6 L654.9 586 L650.3 584 Z M660.3 583.7 L658.8 586.2 L655.3 587.4 L650.7 585.6 L652.9 582 M661.4 587.5 L662.9 593.1 L656.2 593.8 L650.5 591.6 L654.6 587.8 Z M646.8 601.2 L648.4 598.3 L652 598.8 L653.9 600.2 L653.3 602.3 L650.2 602.8 Z M659.4 606 L657.2 609.8 L651.7 610.9 L648.3 608.1 L647.8 605 L651.2 603 L656.5 602.3 Z M649.1 618 L645.4 616.2 L645.3 612.3 L650.5 612.3 L655.1 612.2 L657.7 615.8 L653.2 618.1 Z M660.6 615.5 L657.7 619 L652.5 620.4 L650.1 616.9 L650.4 612.9 M656.7 624.9 L650.3 623.5 L653.2 618.7 L658.8 619.6 L662.4 623.2 Z M658.7 630.4 L658.8 633.3 L654.4 635.4 L650.8 631.9 L654.6 628.8 Z M651.7 637.8 L649.2 635.5 L651.7 633.4 L654.7 633 L658.1 633.8 L657.1 636.2 L655.5 638.8 Z M664.7 643.2 L662.9 645.1 L659.8 645.1 L656.9 643.5 L657.5 640.8 L661.1 640.5 L665.2 640.3 Z M666.1 650.1 L666.2 654.3 L660.2 655.8 L656.2 652 L660.6 648.6 Z M668.6 655.3 L666.3 657.1 L663.5 658.1 L659.4 657.1 L661.1 654.3 L663.5 652.8 L667.6 652.4 Z M658.9 660.5 L659.8 658.2 L662 655.3 L666.1 656.9 L668.2 659.7 L665.7 662.4 M652.5 670.3 L652.3 667.5 L653 664.2 L657.8 664.3 L661.5 666.5 L659.1 669.2 L656.6 671.8 Z M661.7 675 L655.4 675.1 L652.4 671.1 L657.2 667.6 M646.8 681.5 L649.9 676.2 L657.1 676.7 L657.2 681 L653.3 683.9 Z M646.2 686.9 L644.1 682.9 L649.1 681.7 L652.6 683.4 M639.5 689.3 L645.4 687.1 L650.9 689.7 L647.2 693.1 L641.4 694.2 Z M646.3 697 L641.9 695.9 L641.9 692.9 L644.4 690.7 L647.6 692.2 L648.5 694.4 Z M635.4 696 L639 694.7 L641.4 697.1 L640.3 699.5 L638.1 701.9 L635 700 M632 709.5 L628.1 708.2 L627.8 704.9 L631.3 703.2 L634.7 704.2 L636.5 706.1 L636.2 709.1 Z M638.1 709.7 L638.1 711.9 L636.5 714.2 L633.5 713 L629.8 711.6 L632.4 709.3 L635.4 708.3 Z" fill="none" stroke="#a07e4a" stroke-width="0.85"/>
<path d="M491.3 628.7 L490.5 632.2 L485.2 634.5 L483.4 630.1 L486.2 626.3 Z M491.4 638.6 L486.9 637.5 L487.3 633.7 L492.2 632.1 L495.1 634.7 L496.3 638.2 Z" fill="none" stroke="#a07e4a" stroke-width="0.85"/>
<path d="M495 690.1 L491.9 693.2 L487.4 692.3 L485.6 689.8 L487.6 687.4 L492.3 686.6 Z M504.9 688.8 L504.4 692.2 L499.1 691.9 L497.9 688.4 L501.9 687.5 Z M507.9 689.4 L507.4 686.8 L509.1 684.4 L513.2 684.9 L513.8 687.6 L512 690.1 Z M511 682.5 L515 679.7 L520.3 681.3 L519.8 685.8 L513.9 685.8 Z M530.8 679.8 L526.8 683.4 L521.8 681.9 L517.7 679 L522.5 676.7 M524.9 678.6 L530.5 675.9 L535.4 678.3 L534.4 682.8 M537 678.3 L541.1 679.9 L541.2 683 L537 683.3 L533.1 681.1 Z M541.9 680.8 L545.6 680.5 L547 683 L546 685.3 L542.9 685.9 L539.1 685.3 L539.5 682.5 Z M555.4 688.1 L553.2 690.2 L548.6 690.2 L546.4 686.5 L550.8 684.3 L554.6 685.7 Z M562 690.5 L558.6 690.5 L556.6 688.8 L557.3 686.4 L561.1 685.8 L563.3 688 Z M561.1 697.2 L560.3 695 L563 693.4 L566.1 694.2 L567.4 696.2 L567.7 699.5 L563.1 699 Z" fill="none" stroke="#a07e4a" stroke-width="0.85"/>
<path d="M615.1 309.4 L621 311.2 M615.1 309.4 L618 314.9 M615.1 309.4 L613.3 315.3 M615.1 309.4 L609.6 312.3 M615.1 309.4 L609.2 307.6 M615.1 309.4 L612.2 303.9 M615.1 309.4 L616.9 303.5 M615.1 309.4 L620.6 306.5" stroke="#f08a30" stroke-width="1" fill="none"/>
<path d="M620.7 305.1 A6.8 6.8 0 0 1 612 315.6" stroke="#fff" stroke-width="1" fill="none"/>
<path d="M627 322.3 L632.9 324.1 M627 322.3 L629.9 327.8 M627 322.3 L625.2 328.2 M627 322.3 L621.5 325.2 M627 322.3 L621.1 320.5 M627 322.3 L624.1 316.8 M627 322.3 L628.8 316.4 M627 322.3 L632.5 319.4" stroke="#f08a30" stroke-width="1" fill="none"/>
<path d="M632.6 318 A6.8 6.8 0 0 1 623.9 328.5" stroke="#fff" stroke-width="1" fill="none"/>
<path d="M732 379 L737.9 380.8 M732 379 L734.9 384.5 M732 379 L730.2 384.9 M732 379 L726.5 381.9 M732 379 L726.1 377.2 M732 379 L729.1 373.5 M732 379 L733.8 373.1 M732 379 L737.5 376.1" stroke="#f08a30" stroke-width="1" fill="none"/>
<path d="M737.6 374.7 A6.8 6.8 0 0 1 728.9 385.2" stroke="#fff" stroke-width="1" fill="none"/>
<path d="M756.4 650.1 L762.3 651.9 M756.4 650.1 L759.3 655.6 M756.4 650.1 L754.6 656 M756.4 650.1 L750.9 653 M756.4 650.1 L750.5 648.3 M756.4 650.1 L753.5 644.6 M756.4 650.1 L758.2 644.2 M756.4 650.1 L761.9 647.2" stroke="#f08a30" stroke-width="1" fill="none"/>
<path d="M762 645.8 A6.8 6.8 0 0 1 753.3 656.3" stroke="#fff" stroke-width="1" fill="none"/>
<path d="M770 646.9 L775.9 648.7 M770 646.9 L772.9 652.4 M770 646.9 L768.2 652.8 M770 646.9 L764.5 649.8 M770 646.9 L764.1 645.1 M770 646.9 L767.1 641.4 M770 646.9 L771.8 641 M770 646.9 L775.5 644" stroke="#f08a30" stroke-width="1" fill="none"/>
<path d="M775.6 642.6 A6.8 6.8 0 0 1 766.9 653.1" stroke="#fff" stroke-width="1" fill="none"/>
<path d="M669.5 665.2 L675.4 667 M669.5 665.2 L672.4 670.7 M669.5 665.2 L667.7 671.1 M669.5 665.2 L664 668.1 M669.5 665.2 L663.6 663.4 M669.5 665.2 L666.6 659.7 M669.5 665.2 L671.3 659.3 M669.5 665.2 L675 662.3" stroke="#f08a30" stroke-width="1" fill="none"/>
<path d="M675.1 660.9 A6.8 6.8 0 0 1 666.4 671.4" stroke="#fff" stroke-width="1" fill="none"/>
<path d="M662 673.4 L667.9 675.2 M662 673.4 L664.9 678.9 M662 673.4 L660.2 679.3 M662 673.4 L656.5 676.3 M662 673.4 L656.1 671.6 M662 673.4 L659.1 667.9 M662 673.4 L663.8 667.5 M662 673.4 L667.5 670.5" stroke="#f08a30" stroke-width="1" fill="none"/>
<path d="M667.6 669.1 A6.8 6.8 0 0 1 658.9 679.6" stroke="#fff" stroke-width="1" fill="none"/>
<path d="M413.5 309.4 L419.4 311.2 M413.5 309.4 L416.4 314.9 M413.5 309.4 L411.7 315.3 M413.5 309.4 L408 312.3 M413.5 309.4 L407.6 307.6 M413.5 309.4 L410.6 303.9 M413.5 309.4 L415.3 303.5 M413.5 309.4 L419 306.5" stroke="#f08a30" stroke-width="1" fill="none"/>
<path d="M419.1 305.1 A6.8 6.8 0 0 1 410.4 315.6" stroke="#fff" stroke-width="1" fill="none"/>
<path d="M426.3 329.1 L432.2 330.9 M426.3 329.1 L429.2 334.6 M426.3 329.1 L424.5 335 M426.3 329.1 L420.8 332 M426.3 329.1 L420.4 327.3 M426.3 329.1 L423.4 323.6 M426.3 329.1 L428.1 323.2 M426.3 329.1 L431.8 326.2" stroke="#f08a30" stroke-width="1" fill="none"/>
<path d="M431.9 324.8 A6.8 6.8 0 0 1 423.2 335.3" stroke="#fff" stroke-width="1" fill="none"/>
<path d="M708.1 352.5 L710.7 353.1 M707.9 353.2 L711.2 354.4 M707.1 354.5 L710 356.9 M706.6 355.1 L708.6 357.4 M705.7 355.7 L707.1 358.5 M704.5 356.1 L705.1 359.1 M703.1 356.2 L702.8 359.3 M702.1 355.9 L701.1 358.6 M700.9 355.3 L699 357.8 M700 354.5 L697.3 356.6 M699.3 353.1 L696.1 354.3 M699 352 L695.9 352.3 M699.1 351 L696 350.5 M699.4 349.9 L696.4 348.6 M700 348.8 L697.3 346.7 M700.7 348 L698.9 345.7 M702.1 347.3 L701.1 344.5 M703.1 347 L702.8 343.4 M704.1 347 L704.5 343.6 M705.6 347.5 L706.9 344.8 M706.2 347.8 L708 345.2 M707.4 349 L709.7 347.4 M707.8 349.7 L710.5 348.4 M708.1 350.7 L710.8 350.1" stroke="#fff4e8" stroke-width="0.75" fill="none"/>
<path d="M703.6 351.6 L709.5 352.1 M703.6 351.6 L709.1 352.8 M703.6 351.6 L708.6 354.7 M703.6 351.6 L707.6 355.2 M703.6 351.6 L706.8 356.2 M703.6 351.6 L705.4 356.9 M703.6 351.6 L703.8 358.3 M703.6 351.6 L702.3 357.8 M703.6 351.6 L700.6 356.9 M703.6 351.6 L699.4 356 M703.6 351.6 L697.5 354.7 M703.6 351.6 L697.5 352.9 M703.6 351.6 L697 351.5 M703.6 351.6 L697.2 349.9 M703.6 351.6 L697.8 348.2 M703.6 351.6 L699.6 347.7 M703.6 351.6 L700.7 345.9 M703.6 351.6 L702.2 345.7 M703.6 351.6 L703.5 346 M703.6 351.6 L705.5 346 M703.6 351.6 L706.1 346.7 M703.6 351.6 L708.6 347.1 M703.6 351.6 L708.4 348.6 M703.6 351.6 L710 349.4" stroke="#ff5a14" stroke-width="1" fill="none"/>
<circle cx="703.6" cy="351.6" r="3.6" fill="#f4500f"/>
<path d="M727.4 351.9 L730.9 352.1 M727.1 353.3 L730.3 354.5 M726.6 354.1 L729 355.6 M725.4 355.4 L727.2 358.2 M724.6 355.8 L725.7 358.6 M723.1 356.2 L723.3 359.8 M722.4 356.2 L722.1 359.2 M720.9 355.8 L719.6 358.7 M720.1 355.3 L718.2 357.9 M719.2 354.4 L716.7 356.3 M718.6 353.4 L715.7 354.6 M718.3 352.4 L715.3 352.9 M718.3 350.9 L714.8 350.3 M718.6 349.8 L715.3 348.4 M719.1 348.9 L716.9 347.2 M720 348 L718.4 345.8 M721.3 347.3 L720.4 344.8 M722.2 347.1 L721.8 344.1 M723.3 347 L723.6 343.7 M724.3 347.3 L725.5 343.9 M725.7 348 L727.4 345.8 M726.5 348.8 L729 347 M727 349.8 L729.9 348.7 M727.3 350.8 L730.3 350.3" stroke="#fff4e8" stroke-width="0.75" fill="none"/>
<path d="M722.8 351.6 L729.4 351.1 M722.8 351.6 L728.7 353 M722.8 351.6 L727.8 354 M722.8 351.6 L727 356.4 M722.8 351.6 L725.7 356.5 M722.8 351.6 L724 357.8 M722.8 351.6 L723.1 357.8 M722.8 351.6 L721 357.5 M722.8 351.6 L719.9 356.9 M722.8 351.6 L718.4 356 M722.8 351.6 L718.1 354.4 M722.8 351.6 L717.7 353.2 M722.8 351.6 L717 351.4 M722.8 351.6 L717.5 350.1 M722.8 351.6 L717.6 348.7 M722.8 351.6 L718.9 347.7 M722.8 351.6 L720.1 346.4 M722.8 351.6 L721.2 345.5 M722.8 351.6 L722.7 345.4 M722.8 351.6 L724 346.2 M722.8 351.6 L725.6 346.9 M722.8 351.6 L727 347.5 M722.8 351.6 L728.4 348.4 M722.8 351.6 L728.5 349.8" stroke="#ff5a14" stroke-width="1" fill="none"/>
<circle cx="722.8" cy="351.6" r="3.6" fill="#f4500f"/>
<path d="M639 410.9 L641.8 411.3 M638.8 411.7 L642.2 412.9 M638.1 413 L640.2 414.7 M637.2 413.8 L639.2 416.6 M636.4 414.3 L637.5 416.8 M635.2 414.6 L635.7 418 M634.2 414.7 L634 417.3 M632.7 414.3 L631.5 417 M631.8 413.8 L629.8 416.7 M630.8 412.8 L628.4 414.5 M630.2 411.8 L627.8 412.8 M630 411 L627 411.7 M630 409.2 L626.4 408.6 M630.4 408.1 L627 406.6 M630.8 407.4 L628 405.5 M631.6 406.6 L629.6 404.3 M632.5 406 L630.9 402.8 M633.5 405.6 L632.9 402.8 M635.1 405.6 L635.6 402.2 M636.4 405.9 L638 402.7 M637.3 406.5 L639 404.2 M638.2 407.4 L641.1 405.4 M638.7 408.2 L641.7 406.9 M639 409.3 L642.5 408.7" stroke="#fff4e8" stroke-width="0.75" fill="none"/>
<path d="M634.5 410.1 L640.3 410.3 M634.5 410.1 L640.8 411.5 M634.5 410.1 L640.1 413.5 M634.5 410.1 L639.1 415.1 M634.5 410.1 L637.3 414.7 M634.5 410.1 L636.3 416.6 M634.5 410.1 L634.9 416.5 M634.5 410.1 L632.8 415.9 M634.5 410.1 L631.5 415.8 M634.5 410.1 L630 414.3 M634.5 410.1 L629.6 412.9 M634.5 410.1 L628.2 412.3 M634.5 410.1 L628.2 409.7 M634.5 410.1 L628.1 408 M634.5 410.1 L628.6 407 M634.5 410.1 L629.5 405.5 M634.5 410.1 L631.2 405.1 M634.5 410.1 L632.6 404.8 M634.5 410.1 L634.5 403.5 M634.5 410.1 L636.3 404.3 M634.5 410.1 L637.4 405.2 M634.5 410.1 L638.6 406.3 M634.5 410.1 L639.9 406.8 M634.5 410.1 L640.7 408.2" stroke="#ff5a14" stroke-width="1" fill="none"/>
<circle cx="634.5" cy="410.1" r="3.6" fill="#f4500f"/>
<path d="M656.5 428.6 L660 428.9 M656.2 429.9 L659.4 431.2 M655.3 431.2 L657.8 433.3 M654.7 431.8 L656.4 433.9 M653.7 432.4 L655.1 435.7 M652.6 432.7 L653.1 435.7 M651.3 432.7 L650.8 436.4 M650.4 432.5 L649.2 435.7 M648.9 431.6 L646.8 434 M648.3 431 L645.4 433.3 M647.8 430.2 L644.5 431.8 M647.4 428.8 L644.7 429.2 M647.4 427.6 L644 427.1 M647.6 426.7 L644.4 425.7 M648.3 425.4 L645.8 423.4 M648.8 424.8 L646.4 422.1 M650.1 424 L648.9 421.3 M651 423.7 L650.4 421 M652.2 423.6 L652.5 420.2 M653.4 423.9 L654.5 420.5 M654.9 424.7 L657.2 421.9 M655.4 425.3 L658 423.1 M656.1 426.4 L659.3 425 M656.4 427.6 L659.6 427.1" stroke="#fff4e8" stroke-width="0.75" fill="none"/>
<path d="M651.9 428.2 L658.1 427.9 M651.9 428.2 L657.6 429.7 M651.9 428.2 L656.8 431.5 M651.9 428.2 L656.1 432.3 M651.9 428.2 L654.7 432.9 M651.9 428.2 L653.8 434.5 M651.9 428.2 L651.8 434.1 M651.9 428.2 L650.5 434.7 M651.9 428.2 L648.5 433.2 M651.9 428.2 L647.6 432.6 M651.9 428.2 L647.2 431.3 M651.9 428.2 L645.9 429.9 M651.9 428.2 L645.4 428.1 M651.9 428.2 L646.2 427.1 M651.9 428.2 L646.9 425.2 M651.9 428.2 L647.5 424.4 M651.9 428.2 L648.8 423.1 M651.9 428.2 L649.9 422.3 M651.9 428.2 L651.5 421.7 M651.9 428.2 L652.9 423 M651.9 428.2 L655 423.4 M651.9 428.2 L655.8 424 M651.9 428.2 L657.2 425 M651.9 428.2 L657.4 426.7" stroke="#ff5a14" stroke-width="1" fill="none"/>
<circle cx="651.9" cy="428.2" r="3.6" fill="#f4500f"/>
<path d="M711.9 489.8 L715.2 490.3 M711.8 490.6 L714.7 491.6 M710.9 492.2 L713.6 494.4 M710.1 492.9 L712.2 495.7 M708.9 493.5 L709.8 496.1 M708.1 493.7 L708.6 497.2 M707.1 493.8 L706.8 497 M705.7 493.4 L704.3 496.7 M704.5 492.7 L702.5 495.1 M703.7 491.9 L701 493.8 M703.3 491.2 L700.8 492.4 M702.8 489.8 L699.9 490.1 M702.9 488.6 L700.1 488.2 M703.1 487.5 L699.9 486.2 M703.8 486.4 L701.2 484.4 M704.7 485.5 L702.8 483 M705.7 484.9 L704.4 481.9 M706.7 484.7 L706.3 482 M708 484.7 L708.5 481.4 M708.8 484.8 L709.7 482.1 M709.9 485.4 L711.4 483.1 M710.9 486.2 L713.2 484.2 M711.5 487.2 L714.3 485.9 M711.9 488.6 L715.4 488.1" stroke="#fff4e8" stroke-width="0.75" fill="none"/>
<path d="M707.4 489.2 L713.3 489.2 M707.4 489.2 L713.9 490.4 M707.4 489.2 L712.3 492.4 M707.4 489.2 L711.9 493.8 M707.4 489.2 L710.1 494.6 M707.4 489.2 L709.2 495.6 M707.4 489.2 L707.7 495.4 M707.4 489.2 L706 494.4 M707.4 489.2 L704 494.6 M707.4 489.2 L702.5 493.8 M707.4 489.2 L702.3 492.6 M707.4 489.2 L701.7 490.7 M707.4 489.2 L701.6 489.1 M707.4 489.2 L700.8 487.5 M707.4 489.2 L702.5 486.3 M707.4 489.2 L703.3 485 M707.4 489.2 L704.3 483.7 M707.4 489.2 L705.6 483 M707.4 489.2 L707.4 483.3 M707.4 489.2 L708.5 483.4 M707.4 489.2 L710 483.8 M707.4 489.2 L711 485.2 M707.4 489.2 L712.8 485.7 M707.4 489.2 L713.8 487.4" stroke="#ff5a14" stroke-width="1" fill="none"/>
<circle cx="707.4" cy="489.2" r="3.6" fill="#f4500f"/>
<path d="M782.9 435.7 L785.7 435.9 M782.4 437.4 L785 438.6 M782 438.2 L784.1 439.8 M781.1 439 L783.3 441.9 M780.3 439.5 L781.5 442.2 M778.9 439.9 L779.4 443.5 M777.7 440 L777.3 443.4 M776.6 439.7 L775.4 442.9 M775.8 439.2 L774 441.9 M774.5 438 L771.6 440 M774 437.1 L770.7 438.3 M773.7 435.9 L770.4 436.3 M773.7 435.1 L770.7 434.9 M774.2 433.4 L771.2 432 M774.5 432.8 L771.5 430.8 M775.5 431.8 L773.2 428.9 M776.2 431.3 L774.9 428.7 M777.4 430.9 L776.7 427.4 M778.7 430.8 L778.9 427.2 M779.9 431.1 L781.1 427.9 M781.1 431.8 L783.3 428.9 M782 432.7 L784.9 430.7 M782.5 433.7 L785.5 432.4 M782.9 434.9 L786.2 434.5" stroke="#fff4e8" stroke-width="0.75" fill="none"/>
<path d="M778.3 435.4 L784.3 435 M778.3 435.4 L783.8 437.2 M778.3 435.4 L784.1 438.7 M778.3 435.4 L782.8 439.9 M778.3 435.4 L781.5 440.4 M778.3 435.4 L779.7 440.5 M778.3 435.4 L778.3 440.8 M778.3 435.4 L776.8 441.4 M778.3 435.4 L775.7 440.8 M778.3 435.4 L773.8 439.4 M778.3 435.4 L772.9 438.4 M778.3 435.4 L772.5 436.8 M778.3 435.4 L771.6 435.8 M778.3 435.4 L772.3 433.4 M778.3 435.4 L772.7 432.6 M778.3 435.4 L774.2 431.4 M778.3 435.4 L774.7 430.1 M778.3 435.4 L776.5 430.2 M778.3 435.4 L778 429.7 M778.3 435.4 L779.6 429.6 M778.3 435.4 L781.3 430.2 M778.3 435.4 L782.9 431.2 M778.3 435.4 L784 432.1 M778.3 435.4 L784.9 433.8" stroke="#ff5a14" stroke-width="1" fill="none"/>
<circle cx="778.3" cy="435.4" r="3.6" fill="#f4500f"/>
<path d="M414.9 585.8 L417.9 586.1 M414.5 587.3 L417.2 588.4 M413.9 588.2 L416.8 590.5 M413.1 589 L415.1 591.4 M411.9 589.7 L413.1 593.1 M410.7 590 L410.9 592.9 M409.7 590 L409.3 593.4 M408.4 589.6 L407 592.8 M407.8 589.2 L406.2 591.6 M406.6 588.1 L403.9 590.2 M406 587.1 L402.6 588.4 M405.7 585.8 L402.7 586.1 M405.8 584.6 L402.6 584 M406.1 583.5 L402.9 582.1 M406.7 582.5 L404.3 580.6 M407.8 581.6 L405.8 578.6 M408.6 581.1 L407.4 578.2 M409.5 580.9 L409 577.9 M411 580.9 L411.5 577.4 M412.1 581.2 L413.3 578.3 M412.8 581.6 L414.8 578.5 M414 582.7 L416.4 581 M414.4 583.4 L417.3 582 M414.9 585 L417.7 584.7" stroke="#fff4e8" stroke-width="0.75" fill="none"/>
<path d="M410.3 585.4 L416.9 585.2 M410.3 585.4 L416.6 587.2 M410.3 585.4 L415.2 588.3 M410.3 585.4 L414.2 589.2 M410.3 585.4 L412.9 590.5 M410.3 585.4 L411.7 591.6 M410.3 585.4 L410.4 592.2 M410.3 585.4 L408.4 591.8 M410.3 585.4 L407.4 591.5 M410.3 585.4 L405.4 590.1 M410.3 585.4 L405 588.3 M410.3 585.4 L403.8 586.9 M410.3 585.4 L403.6 585.1 M410.3 585.4 L404.5 583.7 M410.3 585.4 L405.2 582.3 M410.3 585.4 L406.1 580.5 M410.3 585.4 L407.7 580.7 M410.3 585.4 L408.5 579.6 M410.3 585.4 L410.4 579.1 M410.3 585.4 L412 579.1 M410.3 585.4 L412.7 580.5 M410.3 585.4 L415.2 580.8 M410.3 585.4 L415 582.3 M410.3 585.4 L416.9 583.9" stroke="#ff5a14" stroke-width="1" fill="none"/>
<circle cx="410.3" cy="585.4" r="3.6" fill="#f4500f"/>
<path d="M463.4 591.1 L466.2 591.5 M463.2 592.1 L466.3 593.4 M462.8 592.9 L465.8 594.8 M461.7 594 L463.6 596.3 M460.7 594.6 L462.1 597.7 M459.7 594.9 L460.3 598 M458.3 594.9 L457.9 597.9 M456.9 594.6 L455.4 597.8 M455.9 593.9 L453.6 596.6 M455.2 593.1 L452.5 595.1 M454.8 592.4 L452.3 593.6 M454.4 591 L450.7 591.5 M454.4 589.6 L450.9 589 M454.6 588.7 L451.4 587.3 M455.2 587.7 L452.8 586 M456.1 586.7 L454.4 584.4 M457.3 586.1 L456.3 583.1 M458.6 585.8 L458.3 582.3 M459.6 585.9 L460.2 582.3 M460.7 586.2 L462.2 582.8 M461.6 586.7 L463.7 583.8 M462.6 587.7 L465.4 585.6 M463.2 588.8 L465.9 587.9 M463.5 589.8 L466.3 589.5" stroke="#fff4e8" stroke-width="0.75" fill="none"/>
<path d="M458.9 590.4 L465.2 590.5 M458.9 590.4 L464.1 591.7 M458.9 590.4 L464.5 593.1 M458.9 590.4 L463 594.4 M458.9 590.4 L462.2 595.9 M458.9 590.4 L460.7 595.9 M458.9 590.4 L458.8 596.7 M458.9 590.4 L456.8 596.8 M458.9 590.4 L455.5 595.6 M458.9 590.4 L454.1 595.1 M458.9 590.4 L453.4 594 M458.9 590.4 L453.5 591.9 M458.9 590.4 L453.2 590.1 M458.9 590.4 L452.9 588.8 M458.9 590.4 L453.7 587.6 M458.9 590.4 L454.5 585.9 M458.9 590.4 L456.2 585.2 M458.9 590.4 L457.7 584.4 M458.9 590.4 L459.1 584.2 M458.9 590.4 L460.8 583.9 M458.9 590.4 L462.1 584.5 M458.9 590.4 L463.4 586.1 M458.9 590.4 L464 587.7 M458.9 590.4 L464.5 588.9" stroke="#ff5a14" stroke-width="1" fill="none"/>
<circle cx="458.9" cy="590.4" r="3.6" fill="#f4500f"/>
<path d="M474.5 601.8 L477.9 602.3 M474.3 602.6 L477.6 603.8 M473.8 603.7 L476.2 605.4 M473 604.6 L474.9 606.9 M471.7 605.3 L472.9 608.3 M470.9 605.6 L471.6 608.8 M469.5 605.7 L469.2 608.3 M468.6 605.5 L467.6 608.4 M467 604.6 L464.9 607 M466.3 603.8 L463.4 605.8 M465.7 602.7 L462.5 603.9 M465.4 601.6 L462.4 601.9 M465.5 600.3 L462.1 599.6 M465.7 599.5 L463.1 598.6 M466.6 598.1 L464.4 596.2 M467.4 597.3 L465.7 594.8 M468 597 L466.6 594 M469.3 596.6 L468.9 593.8 M470.8 596.6 L471.4 593.1 M471.7 596.8 L472.9 593.8 M473 597.7 L475.1 595.3 M473.8 598.5 L476.8 596.4 M474.2 599.3 L477 598 M474.5 600.2 L477.3 599.6" stroke="#fff4e8" stroke-width="0.75" fill="none"/>
<path d="M470 601.1 L476.1 601.3 M470 601.1 L475.6 602.3 M470 601.1 L475.2 603.8 M470 601.1 L474.1 604.8 M470 601.1 L473.4 607 M470 601.1 L471.9 606.6 M470 601.1 L470.1 607.8 M470 601.1 L468.8 607.6 M470 601.1 L466.6 606.2 M470 601.1 L465 605.7 M470 601.1 L464.2 604.2 M470 601.1 L464.6 602.4 M470 601.1 L463.3 600.7 M470 601.1 L464.3 599.8 M470 601.1 L465 597.7 M470 601.1 L466.3 596.9 M470 601.1 L466.5 595.8 M470 601.1 L468.3 595 M470 601.1 L470.3 594.8 M470 601.1 L471.6 594.9 M470 601.1 L473.7 595.7 M470 601.1 L474.3 597.2 M470 601.1 L475.1 598 M470 601.1 L475.3 599.3" stroke="#ff5a14" stroke-width="1" fill="none"/>
<circle cx="470" cy="601.1" r="3.6" fill="#f4500f"/>
<path d="M475.8 619.4 L479.1 620 M475.6 620.1 L478.5 621.1 M475 621.2 L477.3 622.8 M474.4 621.9 L476.8 624.6 M473.1 622.7 L474.3 625.6 M471.7 623.1 L472 626.2 M471 623.1 L470.7 626.1 M469.4 622.7 L467.9 626 M468.6 622.2 L466.7 624.8 M467.6 621.3 L465.3 623 M466.9 619.9 L463.6 621 M466.7 619 L463.5 619.3 M466.7 618.2 L463.1 618 M467.1 616.8 L464.6 615.7 M467.5 616 L464.6 614.1 M468.4 614.9 L466.4 612.4 M469.4 614.3 L468.3 611.7 M470.5 614 L469.9 611.1 M471.8 613.9 L472.2 610.6 M473.3 614.4 L474.8 611.1 M474 614.8 L476.2 611.9 M475.1 615.9 L477.5 614.3 M475.6 617 L479.1 615.8 M475.8 617.7 L479.2 617.2" stroke="#fff4e8" stroke-width="0.75" fill="none"/>
<path d="M471.3 618.5 L477.6 618.9 M471.3 618.5 L476.9 619.7 M471.3 618.5 L477 621.5 M471.3 618.5 L475.4 622 M471.3 618.5 L474.4 623.8 M471.3 618.5 L472.8 625.1 M471.3 618.5 L471.6 624.3 M471.3 618.5 L469.7 623.7 M471.3 618.5 L468.3 624.1 M471.3 618.5 L467.4 622.4 M471.3 618.5 L466 621 M471.3 618.5 L465.6 619.9 M471.3 618.5 L465.4 618.9 M471.3 618.5 L466 617.1 M471.3 618.5 L465.9 615.9 M471.3 618.5 L467.3 614.7 M471.3 618.5 L467.8 612.8 M471.3 618.5 L469.6 613.4 M471.3 618.5 L471.2 612.6 M471.3 618.5 L473.3 612.5 M471.3 618.5 L474.2 613.3 M471.3 618.5 L475.7 614.6 M471.3 618.5 L476.2 616.1 M471.3 618.5 L476.5 616.9" stroke="#ff5a14" stroke-width="1" fill="none"/>
<circle cx="471.3" cy="618.5" r="3.6" fill="#f4500f"/>
<path d="M724.9 672.9 L727.8 673.4 M724.7 673.8 L728.1 675.1 M724 675 L726.1 676.8 M723.5 675.5 L725.7 678 M722.1 676.3 L723.2 678.9 M720.9 676.7 L721.2 680.1 M719.5 676.6 L718.9 679.5 M718.9 676.4 L717.8 679.5 M717.4 675.6 L715.4 677.9 M716.8 675 L714.1 677.2 M716.3 674.1 L713.7 675.5 M715.9 673 L713 673.7 M715.8 671.8 L713.1 671.6 M716.1 670.6 L712.6 669.4 M717 669.1 L714.5 666.9 M717.5 668.5 L715.4 665.9 M718.4 668 L717 665 M719.9 667.5 L719.5 664.9 M720.9 667.5 L721.4 664.1 M721.9 667.8 L723 664.3 M723.1 668.4 L725.2 665.5 M724.1 669.5 L726.6 667.7 M724.7 670.6 L727.7 669.6 M724.9 671.5 L727.7 671.1" stroke="#fff4e8" stroke-width="0.75" fill="none"/>
<path d="M720.4 672.1 L726.9 672.4 M720.4 672.1 L726 673.5 M720.4 672.1 L725.2 675.1 M720.4 672.1 L724.5 675.6 M720.4 672.1 L723.7 677.8 M720.4 672.1 L721.8 678.2 M720.4 672.1 L720 678.2 M720.4 672.1 L719.2 677.6 M720.4 672.1 L717.1 677.1 M720.4 672.1 L716.6 676.1 M720.4 672.1 L715.7 675.2 M720.4 672.1 L714.1 674.3 M720.4 672.1 L714.6 672.5 M720.4 672.1 L714.4 670.8 M720.4 672.1 L715.1 668.5 M720.4 672.1 L715.9 667.8 M720.4 672.1 L717.2 667.2 M720.4 672.1 L719 666.5 M720.4 672.1 L720.3 665.6 M720.4 672.1 L721.7 665.6 M720.4 672.1 L723.5 666.4 M720.4 672.1 L725 667.8 M720.4 672.1 L725.2 669.7 M720.4 672.1 L725.7 670.6" stroke="#ff5a14" stroke-width="1" fill="none"/>
<circle cx="720.4" cy="672.1" r="3.6" fill="#f4500f"/>
<path d="M775.5 670.3 L778.9 670.8 M775.2 671.5 L777.7 672.6 M774.7 672.4 L777.4 674.4 M774.1 673.1 L775.9 675.1 M772.6 674 L773.7 677.1 M771.6 674.3 L772 677.9 M770.1 674.2 L769.4 677.6 M769.4 674 L768.3 676.8 M768 673.2 L766 675.5 M767.4 672.6 L765 674.5 M766.8 671.6 L763.9 672.9 M766.4 670.3 L763.6 670.6 M766.5 668.8 L763 668.1 M766.8 667.9 L763.5 666.5 M767.2 667.2 L764.9 665.7 M768.3 666 L766.6 663.5 M769 665.6 L767.4 662.3 M770.5 665.1 L770.3 662.5 M771.8 665.2 L772.4 661.9 M772.6 665.4 L773.8 662.4 M773.7 666 L775.6 663.3 M774.7 667 L777.6 665 M775.2 667.9 L777.8 666.9 M775.5 668.9 L778.9 668.2" stroke="#fff4e8" stroke-width="0.75" fill="none"/>
<path d="M771 669.7 L776.4 669.7 M771 669.7 L776.8 671.4 M771 669.7 L776.2 672.5 M771 669.7 L775.9 673.8 M771 669.7 L773.8 675.1 M771 669.7 L772.6 675.9 M771 669.7 L770.5 676.3 M771 669.7 L769.6 675.8 M771 669.7 L767.4 675.1 M771 669.7 L766.4 674.6 M771 669.7 L765.7 673 M771 669.7 L765.1 671.2 M771 669.7 L765.6 669.3 M771 669.7 L764.7 667.9 M771 669.7 L765 666.8 M771 669.7 L767.2 665.6 M771 669.7 L767.8 664.7 M771 669.7 L769.7 664.2 M771 669.7 L771.3 663.6 M771 669.7 L772.2 664.5 M771 669.7 L773.6 664.8 M771 669.7 L775.6 665.4 M771 669.7 L776.2 666.7 M771 669.7 L776.5 667.9" stroke="#ff5a14" stroke-width="1" fill="none"/>
<circle cx="771" cy="669.7" r="3.6" fill="#f4500f"/>
<path d="M745.6 694.7 L749.1 695.2 M745.2 696 L748.1 697.4 M744.9 696.5 L747.8 698.5 M743.9 697.6 L745.8 700 M742.7 698.3 L743.9 701.5 M741.4 698.6 L741.6 701.5 M740.3 698.5 L739.8 701.3 M739.1 698.1 L737.7 700.9 M738.1 697.4 L735.9 699.9 M737.3 696.6 L734.8 698.2 M737 696 L733.8 697.6 M736.5 694.5 L733.4 694.8 M736.6 693.2 L733.8 692.8 M736.9 692.1 L734.4 690.9 M737.3 691.4 L734.7 689.6 M738.3 690.3 L736.4 687.8 M739.2 689.8 L737.8 686.5 M740.9 689.4 L740.7 686 M741.5 689.4 L741.8 686.2 M742.6 689.7 L743.5 687.1 M744.1 690.5 L746.1 688.3 M744.8 691.3 L747.2 689.4 M745.3 692.2 L748.6 690.9 M745.6 693.4 L749 692.9" stroke="#fff4e8" stroke-width="0.75" fill="none"/>
<path d="M741.1 694 L747.5 694.1 M741.1 694 L747.5 696.1 M741.1 694 L746 696.4 M741.1 694 L745.1 697.9 M741.1 694 L744.2 699.9 M741.1 694 L742.2 699.7 M741.1 694 L740.8 699.7 M741.1 694 L739 700.1 M741.1 694 L738 698.5 M741.1 694 L736.6 697.9 M741.1 694 L736.2 697.3 M741.1 694 L734.8 695.5 M741.1 694 L734.9 693.8 M741.1 694 L735.5 692.2 M741.1 694 L735.2 691 M741.1 694 L736.7 689.5 M741.1 694 L737.8 688.7 M741.1 694 L740.1 688.8 M741.1 694 L740.9 688 M741.1 694 L742.4 687.8 M741.1 694 L744.9 688.4 M741.1 694 L745 690.2 M741.1 694 L746.4 690.9 M741.1 694 L746.7 692.5" stroke="#ff5a14" stroke-width="1" fill="none"/>
<circle cx="741.1" cy="694" r="3.6" fill="#f4500f"/>
<path d="M775.5 692.1 L778.6 692.5 M775.4 692.9 L778 693.8 M774.4 694.5 L777 696.8 M774 695 L775.7 697.1 M772.6 695.8 L773.7 698.8 M771.4 696.1 L771.6 699 M770.3 696 L769.8 699.5 M769.1 695.7 L767.9 698.1 M768.5 695.3 L767 697.6 M767.2 694.1 L764.2 696.1 M766.8 693.3 L763.6 694.6 M766.5 692.3 L763 693 M766.5 690.6 L763.7 690 M766.8 689.6 L764.2 688.5 M767.5 688.6 L765.4 686.8 M768.4 687.7 L766.4 684.7 M769.3 687.2 L768.3 684.6 M770.2 687 L769.5 683.4 M771.7 687 L772.1 683.6 M772.7 687.2 L773.8 684.6 M773.7 687.8 L775.3 685.6 M774.6 688.7 L777.6 686.5 M775.3 689.8 L778.2 688.6 M775.5 690.7 L778.2 690.2" stroke="#fff4e8" stroke-width="0.75" fill="none"/>
<path d="M771 691.5 L777.3 691.5 M771 691.5 L777.3 692.7 M771 691.5 L776 694.9 M771 691.5 L775.5 695.7 M771 691.5 L774.1 697.4 M771 691.5 L772.2 697.2 M771 691.5 L770.9 697.7 M771 691.5 L769.2 697 M771 691.5 L768.2 697.3 M771 691.5 L766.8 695.2 M771 691.5 L765.2 694.9 M771 691.5 L765 693.4 M771 691.5 L765.2 691.1 M771 691.5 L765.2 689.8 M771 691.5 L766.2 688.4 M771 691.5 L766.9 686.9 M771 691.5 L767.9 686 M771 691.5 L769.1 685.6 M771 691.5 L771.1 685.9 M771 691.5 L772.4 685.9 M771 691.5 L774 686.2 M771 691.5 L775.3 687.2 M771 691.5 L775.9 688.8 M771 691.5 L777.1 689.6" stroke="#ff5a14" stroke-width="1" fill="none"/>
<circle cx="771" cy="691.5" r="3.6" fill="#f4500f"/>
<path d="M586.7 339.2 L594.8 339.9 M586.7 339.2 L592.6 340.7 M586.7 339.2 L591.5 342.2 M586.7 339.2 L588.2 343.9 M586.7 339.2 L586 344.8 M586.7 339.2 L583.7 345.5 M586.7 339.2 L579.8 343.8 M586.7 339.2 L578.3 342.2 M586.7 339.2 L577.6 338.2 M586.7 339.2 L580.4 337.8 M586.7 339.2 L582.4 334.5 M586.7 339.2 L583.1 334.2 M586.7 339.2 L587.4 334.3 M586.7 339.2 L588.5 333.6 M586.7 339.2 L591.3 336.3 M586.7 339.2 L594.8 335.4" stroke="#8484ff" stroke-width="1.5" fill="none"/>
<circle cx="586.7" cy="339.2" r="2.8" fill="#8484ff"/>
<path d="M715.3 392.7 L721.5 392.9 M715.3 392.7 L721.6 395.2 M715.3 392.7 L718.9 396.2 M715.3 392.7 L718.6 397.7 M715.3 392.7 L714.6 399.9 M715.3 392.7 L713.2 397.5 M715.3 392.7 L709.3 396.9 M715.3 392.7 L710.4 395.1 M715.3 392.7 L707.1 393.7 M715.3 392.7 L709.5 390.9 M715.3 392.7 L710.1 389.5 M715.3 392.7 L712.1 385.6 M715.3 392.7 L715.1 387.3 M715.3 392.7 L719.6 386.1 M715.3 392.7 L719.1 388.5 M715.3 392.7 L722.8 391" stroke="#8484ff" stroke-width="1.5" fill="none"/>
<circle cx="715.3" cy="392.7" r="2.8" fill="#8484ff"/>
<path d="M753.9 378.5 L763 379.6 M753.9 378.5 L758.2 380.6 M753.9 378.5 L759.7 384.3 M753.9 378.5 L755.9 384.4 M753.9 378.5 L754.4 384.7 M753.9 378.5 L750.5 384.5 M753.9 378.5 L750.9 381.7 M753.9 378.5 L748.1 380.8 M753.9 378.5 L746 377.8 M753.9 378.5 L747.1 376.3 M753.9 378.5 L748.9 374.7 M753.9 378.5 L751.7 373.7 M753.9 378.5 L752.9 370.9 M753.9 378.5 L756.7 373.3 M753.9 378.5 L760.3 374.3 M753.9 378.5 L759.6 376.5" stroke="#8484ff" stroke-width="1.5" fill="none"/>
<circle cx="753.9" cy="378.5" r="2.8" fill="#8484ff"/>
<path d="M686.7 580.4 L695.8 581.5 M686.7 580.4 L691 582.5 M686.7 580.4 L692.5 586.2 M686.7 580.4 L688.7 586.3 M686.7 580.4 L687.2 586.6 M686.7 580.4 L683.3 586.4 M686.7 580.4 L683.7 583.6 M686.7 580.4 L680.9 582.7 M686.7 580.4 L678.8 579.7 M686.7 580.4 L679.9 578.2 M686.7 580.4 L681.7 576.6 M686.7 580.4 L684.5 575.6 M686.7 580.4 L685.7 572.8 M686.7 580.4 L689.5 575.2 M686.7 580.4 L693.1 576.2 M686.7 580.4 L692.4 578.4" stroke="#8484ff" stroke-width="1.5" fill="none"/>
<circle cx="686.7" cy="580.4" r="2.8" fill="#8484ff"/>
<path d="M755.3 680.8 L761.4 680.6 M755.3 680.8 L763.6 683.9 M755.3 680.8 L759.6 684 M755.3 680.8 L757.9 684.6 M755.3 680.8 L756.1 687.1 M755.3 680.8 L753.4 686 M755.3 680.8 L751 683.6 M755.3 680.8 L750.2 682.8 M755.3 680.8 L749.9 681.4 M755.3 680.8 L746.8 678 M755.3 680.8 L750.6 676.4 M755.3 680.8 L753.8 676.2 M755.3 680.8 L755.6 675.9 M755.3 680.8 L758.1 676.9 M755.3 680.8 L761.1 676.7 M755.3 680.8 L762.1 678.3" stroke="#8484ff" stroke-width="1.5" fill="none"/>
<circle cx="755.3" cy="680.8" r="2.8" fill="#8484ff"/>
<path d="M721.2 716.4 L727.2 716.4 M721.2 716.4 L728 718.6 M721.2 716.4 L726.5 721.5 M721.2 716.4 L724.2 723.1 M721.2 716.4 L722 722.9 M721.2 716.4 L719 721.3 M721.2 716.4 L716.1 719.6 M721.2 716.4 L713.8 719.6 M721.2 716.4 L716 716.4 M721.2 716.4 L714.8 714.7 M721.2 716.4 L716.9 712.6 M721.2 716.4 L717.6 709.7 M721.2 716.4 L720.9 709.1 M721.2 716.4 L723.4 712 M721.2 716.4 L727.6 711.4 M721.2 716.4 L728.9 714.7" stroke="#8484ff" stroke-width="1.5" fill="none"/>
<circle cx="721.2" cy="716.4" r="2.8" fill="#8484ff"/>
<path d="M513.9 690.9 L519 691.2 M513.9 690.9 L519.7 692.6 M513.9 690.9 L519.5 697 M513.9 690.9 L515.9 696.4 M513.9 690.9 L513.1 696.7 M513.9 690.9 L511.1 695.7 M513.9 690.9 L506.4 695.5 M513.9 690.9 L506.8 693.9 M513.9 690.9 L505.7 690 M513.9 690.9 L508.1 688.9 M513.9 690.9 L508.9 687.1 M513.9 690.9 L511.1 685.9 M513.9 690.9 L513.5 683.5 M513.9 690.9 L516.8 686.1 M513.9 690.9 L519.8 686.2 M513.9 690.9 L518.6 689.6" stroke="#8484ff" stroke-width="1.5" fill="none"/>
<circle cx="513.9" cy="690.9" r="2.8" fill="#8484ff"/>
<path d="M550 715.8 L558.7 715.9 M550 715.8 L556.6 717.3 M550 715.8 L555.7 721.4 M550 715.8 L553.8 722.6 M550 715.8 L549.7 722.3 M550 715.8 L547.6 720 M550 715.8 L546.2 719.2 M550 715.8 L544.3 717.5 M550 715.8 L544.3 715.2 M550 715.8 L544.5 714 M550 715.8 L543.7 710.6 M550 715.8 L547.4 709.3 M550 715.8 L550.1 709.2 M550 715.8 L551.7 711.2 M550 715.8 L556.8 710.6 M550 715.8 L557.7 714.2" stroke="#8484ff" stroke-width="1.5" fill="none"/>
<circle cx="550" cy="715.8" r="2.8" fill="#8484ff"/>
<path d="M321 331 L328.1 331.7 M321 331 L329.5 333.2 M321 331 L327 336.8 M321 331 L323.6 336.3 M321 331 L321.5 335.7 M321 331 L317.2 336.8 M321 331 L313.6 336.8 M321 331 L315.8 333 M321 331 L311 331.8 M321 331 L315.7 329.8 M321 331 L317.7 327.4 M321 331 L318.3 325.8 M321 331 L320.9 323.4 M321 331 L325.1 324.2 M321 331 L327.9 326.3 M321 331 L330.8 328.4" stroke="#f030f0" stroke-width="1.5" fill="none"/>
<circle cx="321" cy="331" r="2.8" fill="#f030f0"/>
<path d="M318 337 l2 3 l2 -2 l1 3 l3 -1 M326 334 l3 2 l-1 2" stroke="#fff" stroke-width="0.8" fill="none"/>
<path d="M305.5 342.5 L314.4 342.2 M305.5 342.5 L314.2 345.9 M305.5 342.5 L310.4 347.4 M305.5 342.5 L308.4 348.3 M305.5 342.5 L306.3 350.4 M305.5 342.5 L302.6 348.7 M305.5 342.5 L300.4 346 M305.5 342.5 L300.4 344.1 M305.5 342.5 L299.1 342 M305.5 342.5 L299.1 340.4 M305.5 342.5 L298.4 336.9 M305.5 342.5 L302.7 335.5 M305.5 342.5 L305.5 338 M305.5 342.5 L308.9 337.4 M305.5 342.5 L311.2 338.2 M305.5 342.5 L311.3 340.6" stroke="#f030f0" stroke-width="1.5" fill="none"/>
<circle cx="305.5" cy="342.5" r="2.8" fill="#f030f0"/>
<path d="M302.5 348.5 l2 3 l2 -2 l1 3 l3 -1 M310.5 345.5 l3 2 l-1 2" stroke="#fff" stroke-width="0.8" fill="none"/>
<path d="M295 372.5 L301.4 372.5 M295 372.5 L304.2 375 M295 372.5 L301 377.8 M295 372.5 L299.2 379.7 M295 372.5 L294.6 380.4 M295 372.5 L291.6 379.5 M295 372.5 L289.6 377.9 M295 372.5 L287.1 375.9 M295 372.5 L287.8 372.8 M295 372.5 L287.8 371 M295 372.5 L289.2 367.9 M295 372.5 L293.4 368.1 M295 372.5 L296 366.8 M295 372.5 L298.3 368 M295 372.5 L301.1 365.9 M295 372.5 L303.5 370.4" stroke="#f030f0" stroke-width="1.5" fill="none"/>
<circle cx="295" cy="372.5" r="2.8" fill="#f030f0"/>
<path d="M292 378.5 l2 3 l2 -2 l1 3 l3 -1 M300 375.5 l3 2 l-1 2" stroke="#fff" stroke-width="0.8" fill="none"/>
<circle cx="413" cy="235.5" r="1.2" fill="none" stroke="#28b040" stroke-width="1"/>
<circle cx="413" cy="235.5" r="3" fill="none" stroke="#28b040" stroke-width="1"/>
<circle cx="413" cy="235.5" r="4.8" fill="none" stroke="#28b040" stroke-width="1"/>
<path d="M417.5 231 A6.500 6.500 0 0 1 411.5 242" stroke="#fff" stroke-width="1" fill="none"/>
<circle cx="431.5" cy="248.5" r="1.2" fill="none" stroke="#28b040" stroke-width="1"/>
<circle cx="431.5" cy="248.5" r="3" fill="none" stroke="#28b040" stroke-width="1"/>
<circle cx="431.5" cy="248.5" r="4.8" fill="none" stroke="#28b040" stroke-width="1"/>
<path d="M436 244 A6.500 6.500 0 0 1 430 255" stroke="#fff" stroke-width="1" fill="none"/>
<circle cx="391.5" cy="256.2" r="1.2" fill="none" stroke="#28b040" stroke-width="1"/>
<circle cx="391.5" cy="256.2" r="3" fill="none" stroke="#28b040" stroke-width="1"/>
<circle cx="391.5" cy="256.2" r="4.8" fill="none" stroke="#28b040" stroke-width="1"/>
<path d="M396 251.7 A6.500 6.500 0 0 1 390 262.7" stroke="#fff" stroke-width="1" fill="none"/>
<circle cx="458" cy="264.5" r="1.2" fill="none" stroke="#28b040" stroke-width="1"/>
<circle cx="458" cy="264.5" r="3" fill="none" stroke="#28b040" stroke-width="1"/>
<circle cx="458" cy="264.5" r="4.8" fill="none" stroke="#28b040" stroke-width="1"/>
<path d="M462.5 260 A6.500 6.500 0 0 1 456.5 271" stroke="#fff" stroke-width="1" fill="none"/>
<circle cx="543.7" cy="259.1" r="1.2" fill="none" stroke="#28b040" stroke-width="1"/>
<circle cx="543.7" cy="259.1" r="3" fill="none" stroke="#28b040" stroke-width="1"/>
<circle cx="543.7" cy="259.1" r="4.8" fill="none" stroke="#28b040" stroke-width="1"/>
<path d="M548.2 254.6 A6.500 6.500 0 0 1 542.2 265.6" stroke="#fff" stroke-width="1" fill="none"/>
<circle cx="463.8" cy="452.3" r="1.2" fill="none" stroke="#28b040" stroke-width="1"/>
<circle cx="463.8" cy="452.3" r="3" fill="none" stroke="#28b040" stroke-width="1"/>
<circle cx="463.8" cy="452.3" r="4.8" fill="none" stroke="#28b040" stroke-width="1"/>
<path d="M468.3 447.8 A6.500 6.500 0 0 1 462.3 458.8" stroke="#fff" stroke-width="1" fill="none"/>
<polygon points="428.2,312.3 434.1,308.4 435.1,319.2 429.2,320.2" fill="#d8d020"/>
<polygon points="417.4,318.2 423.3,315.3 424.3,324.1 417.4,325.1" fill="#d8d020"/>
<polygon points="432.2,318.2 439.1,315.3 439.1,324.1 432.2,325.1" fill="#d8d020"/>
<polygon points="547.6,383.5 554,381.6 554,390 547.6,392" fill="#d8d020"/>
<polygon points="521.4,392 528,390 528,403 521.4,405" fill="#d8d020"/>
<polygon points="536.4,399.3 543.8,395.6 555,400.3 555,410.5 544.8,412.8 536.4,406.8" fill="#d8d020"/>
<polygon points="521.4,416 528,413.3 528,421.7 521.4,423.6" fill="#d8d020"/>
<polygon points="535.4,424.5 542.5,420.8 542.5,429.2 535.4,431" fill="#d8d020"/>
<polygon points="555,419 560.6,417 560.6,425.5 555,426.4" fill="#d8d020"/>
<path d="M385.5 456 h1 M382 463 h1 M385.5 470 h1 M382 477 h1 M385.5 484 h1 M382 491 h1 M385.5 498 h1 M392.5 456 h1 M389 463 h1 M392.5 470 h1 M389 477 h1 M392.5 484 h1 M389 491 h1 M392.5 498 h1 M392.5 512 h1 M399.5 456 h1 M396 463 h1 M399.5 470 h1 M396 477 h1 M399.5 484 h1 M396 491 h1 M399.5 498 h1 M396 505 h1 M399.5 512 h1 M396 519 h1 M406.5 456 h1 M403 463 h1 M406.5 470 h1 M403 477 h1 M406.5 484 h1 M403 491 h1 M413.5 456 h1 M410 463 h1 M413.5 470 h1 M410 477 h1 M420.5 456 h1 M417 463 h1 M420.5 470 h1 M417 477 h1 M427.5 456 h1 M424 463 h1 M427.5 470 h1 M424 477 h1 M434.5 456 h1 M431 463 h1 M434.5 470 h1 M431 477 h1 M441.5 456 h1 M438 463 h1 M441.5 470 h1 M438 477 h1 M441.5 484 h1 M448.5 456 h1 M445 463 h1 M448.5 470 h1 M445 477 h1 M448.5 484 h1 M455.5 456 h1 M452 463 h1 M455.5 470 h1 M452 477 h1 M455.5 484 h1 M452 491 h1 M455.5 498 h1 M452 505 h1 M455.5 512 h1 M452 519 h1 M462.5 456 h1 M459 463 h1 M462.5 470 h1 M459 477 h1 M462.5 484 h1 M459 491 h1 M462.5 498 h1 M459 505 h1 M462.5 512 h1 M459 519 h1 M469.5 456 h1 M466 463 h1 M469.5 470 h1 M466 477 h1 M469.5 484 h1 M466 491 h1 M469.5 498 h1 M466 505 h1 M476.5 456 h1 M473 463 h1 M476.5 470 h1 M473 477 h1 M473 491 h1 M483.5 456 h1 M480 463 h1 M487 435 h1 M487 449 h1" stroke="#e8e8e8" stroke-width="1" fill="none"/>
<path d="M373 524 L389.2 516.5" fill="none" stroke="#fff" stroke-width="1" />
<path d="M536.3 679.8 L548.7 671 L586 671" fill="none" stroke="#fff" stroke-width="1" />
<path d="M696.9 207 H683.9 A13 13 0 1 1 696.9 220 Z" fill="#ee1c12"/>
<path d="M696.9 207 L709.9 207 L696.9 220 Z" fill="#ee1c12"/>
<circle cx="696.9" cy="207" r="13" fill="none" stroke="#f0c060" stroke-width="1"/>
<path d="M683.9 207 H696.9 V220 L709.9 207" fill="none" stroke="#f0c060" stroke-width="1"/>
<text x="718" y="214.600" font-family="Liberation Sans,sans-serif" font-size="13.600" fill="#fff0c8">N</text>
<text x="343" y="685.500" font-family="Liberation Serif,Noto Serif CJK SC,serif" font-size="16.500" font-weight="300" fill="#fff">茶室</text>
<text x="788" y="527" font-family="Liberation Serif,Noto Serif CJK SC,serif" font-size="13.700" font-weight="300" fill="#2626cc">活动室</text>
<text x="597" y="213" font-family="Liberation Serif,Noto Serif CJK SC,serif" font-size="6.500" fill="#2020d0">库房</text>
<text x="597" y="256" font-family="Liberation Serif,Noto Serif CJK SC,serif" font-size="6.500" fill="#181890">包间</text>
<text x="640" y="359" font-family="Liberation Serif,Noto Serif CJK SC,serif" font-size="5.500" fill="#2020b0">观景亭</text>
<text x="392" y="290" font-family="Liberation Serif,Noto Serif CJK SC,serif" font-size="6.400" fill="#c030c0">亲水平台</text>
<text x="550" y="646.500" font-family="Liberation Serif,Noto Serif CJK SC,serif" font-size="5" fill="#c030c0">花架</text>
<text x="550" y="665" font-family="Liberation Serif,Noto Serif CJK SC,serif" font-size="5" fill="#c030c0">入口</text>
<text x="583.5" y="786.5" font-family="Liberation Serif,Noto Serif CJK SC,serif" font-size="6" fill="#d02020">主入口</text>
<text x="583.5" y="795.500" font-family="Liberation Serif,Noto Serif CJK SC,serif" font-size="6" fill="#a01818">门厅</text>
<rect x="866.2" y="825.5" width="224.5" height="7.800" fill="#8c8c8c"/>
<rect x="897.4" y="827.300" width="65.2" height="4.200" fill="#6a6a6a"/>
<text x="898" y="821.5" font-family="Liberation Sans,sans-serif" font-size="10.500" fill="#8c8c8c" text-anchor="middle">25</text>
<text x="1090" y="821.5" font-family="Liberation Sans,sans-serif" font-size="10.500" fill="#8c8c8c" text-anchor="middle">175</text>
<text x="866" y="843.5" font-family="Liberation Sans,sans-serif" font-size="10.500" fill="#8c8c8c" text-anchor="middle">0</text>
<text x="962" y="843.5" font-family="Liberation Sans,sans-serif" font-size="10.500" fill="#8c8c8c" text-anchor="middle">75</text>
<path d="M179.5 552 L179.5 863" fill="none" stroke="#fff" stroke-width="1" />
<path d="M45 778.5 L404 778.5" fill="none" stroke="#fff" stroke-width="1" />
<path d="M67.5 838 L67.5 799" fill="none" stroke="#fff" stroke-width="1" />
<path d="M67.5 839.5 L106 839.5" fill="none" stroke="#fff" stroke-width="1" />
<rect x="63.300" y="835.200" width="8.600" height="8.600" fill="#000" stroke="#fff" stroke-width="1"/>
<path d="M67.500 789.500 L64 800.500 H71 Z M67.500 793 V800" fill="none" stroke="#fff" stroke-width="1"/>
<path d="M117.500 839.500 L106.500 836 V843 Z M114 839.500 H107" fill="none" stroke="#fff" stroke-width="1"/>
<path d="M63 771 L67.500 776.200 L73 771 M67.500 776.200 V780.500" fill="none" stroke="#fff" stroke-width="1"/>
<path d="M127 834.500 L136 844.500 M136 834.500 L127 844.500" fill="none" stroke="#fff" stroke-width="1"/>
</svg>
<div class="abs" style="left:149px;top:631px;width:260.500px;height:21px;box-sizing:border-box;border:1px solid #c8c8dc;background:#1c2470;color:#fff;font-size:12.300px;letter-spacing:0.180px;line-height:18.500px;white-space:nowrap;padding-left:3px;overflow:hidden;">指定图片范围或 [全图(F)/图片像素(P)]&lt;全图&gt;:</div>
<div class="abs" style="left:413px;top:631px;width:57px;height:21px;box-sizing:border-box;border:1px solid #e8e8e8;background:#fff;"><span class="abs" style="left:4.500px;top:2px;height:15px;background:#0a74d8;color:#fff;font-size:12.800px;line-height:15px;white-space:nowrap;">330.835</span></div>
<div class="abs" style="left:473px;top:631.500px;width:56.500px;height:20px;box-sizing:border-box;border:1px solid #c8c8dc;background:#1c2470;color:#f0f0f0;font-size:12.800px;line-height:17.500px;white-space:nowrap;text-align:center;">544.949</div>
</div>
<!-- window borders -->
<div class="wb" style="left:0;top:0;width:1px;height:965px;background:#8c8c8c"></div>
<div class="wb" style="left:1px;top:31px;width:1px;height:934px;background:#dcdcdc"></div>
<div class="wb" style="left:1208px;top:0;width:1px;height:965px;background:#8c8c8c"></div>
<div class="wb" style="left:1207px;top:31px;width:1px;height:934px;background:#dcdcdc"></div>
<div class="wb" style="left:0;top:963px;width:1209px;height:2px;background:#7d7d7d"></div>
</div>
</body>
</html>
